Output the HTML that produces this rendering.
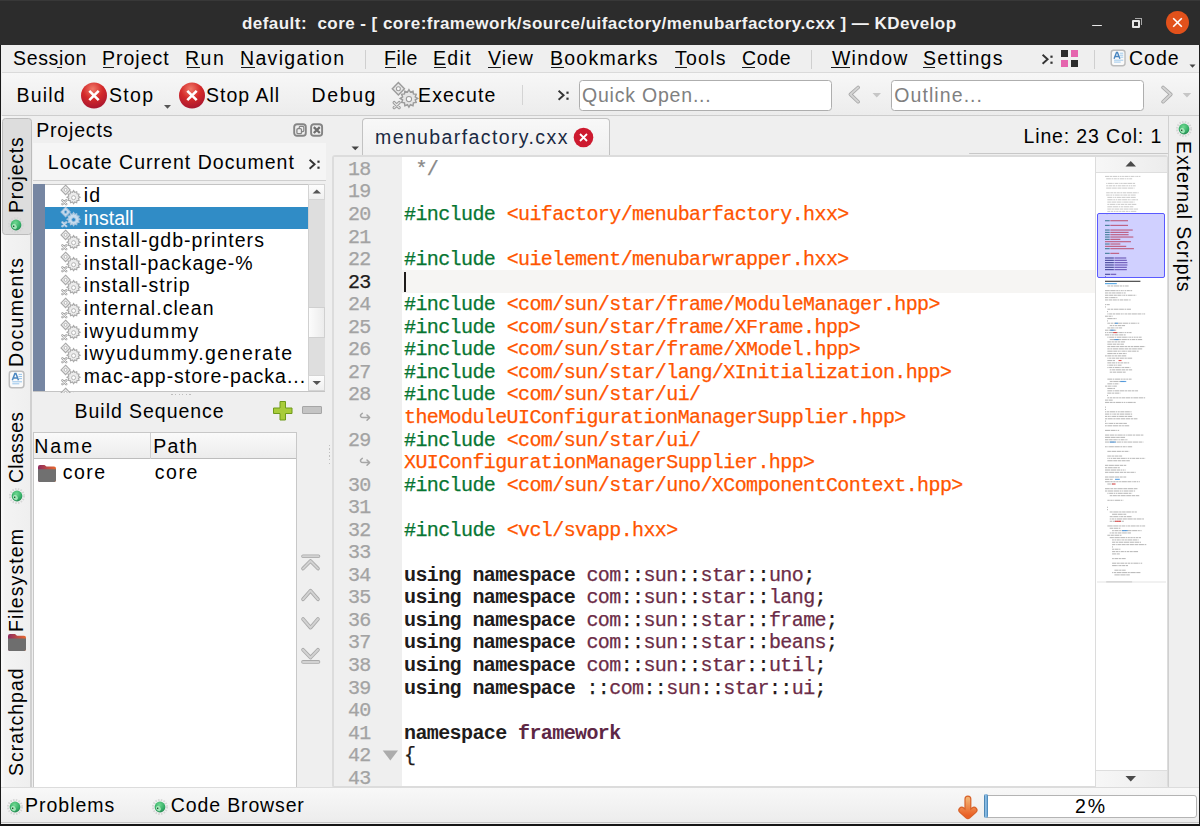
<!DOCTYPE html>
<html><head><meta charset="utf-8"><style>
*{margin:0;padding:0;box-sizing:border-box}
html,body{width:1200px;height:826px;overflow:hidden;background:#efefef;font-family:"Liberation Sans", sans-serif;position:relative}
.t{position:absolute;white-space:pre}
.a{position:absolute}
</style></head><body>
<!-- title bar -->
<div class=a style="left:0;top:0;width:1200px;height:45px;background:#2c2c2c"></div>
<div class=a style="left:0;top:0;width:1200px;height:1px;background:#383838"></div>
<div class=a style="left:1092px;top:24.5px;width:10px;height:1.6px;background:#e8e8e8;border-radius:1px"></div>
<div class=a style="left:1134.6px;top:17.6px;width:7.6px;height:7.6px;border-top:1.3px solid #a8a8a8;border-right:1.3px solid #a8a8a8"></div>
<div class=a style="left:1132px;top:19.8px;width:7.8px;height:7.8px;border:2px solid #e6e6e6;border-radius:1px;background:#2c2c2c"></div>
<div class=a style="left:1166px;top:11px;width:23px;height:23px;border-radius:50%;background:#e2511b"></div>
<svg class=a style="left:1166px;top:11px" width="23" height="23"><path d="M7.2 7.2L15.8 15.8M15.8 7.2L7.2 15.8" stroke="#fff" stroke-width="1.6"/></svg>
<!-- window border -->
<div class=a style="left:0;top:45px;width:1.1px;height:781px;background:#1a1a1a"></div>
<div class=a style="left:1198.8px;top:45px;width:1.5px;height:781px;background:#1e1e1e"></div>
<div class=a style="left:0;top:824.3px;width:1200px;height:2px;background:#161616"></div>
<!-- menubar -->
<div class=a style="left:1.1px;top:45px;width:1197.5px;height:27px;background:#efefef"></div>
<div class=a style="left:1.5px;top:72px;width:1197px;height:1px;background:#dadada"></div>
<!-- menu underlines -->
<div id=ul></div>
<div class=a style="left:365px;top:50px;width:1px;height:19px;background:#cfcfcf"></div>
<div class=a style="left:811px;top:50px;width:1px;height:19px;background:#cfcfcf"></div>
<div class=a style="left:1093.5px;top:50px;width:1px;height:19px;background:#cfcfcf"></div>
<!-- toolbar -->
<div class=a style="left:1.5px;top:73px;width:1197px;height:42px;background:linear-gradient(#f7f7f7,#ececec)"></div>
<div class=a style="left:1.5px;top:114.5px;width:1197px;height:1px;background:#cdcdcd"></div>
<div class=a style="left:522px;top:85px;width:1px;height:20px;background:#d4d4d4"></div>
<!-- menu right icons -->
<svg class=a style="left:1040px;top:52px" width="14" height="14"><path d="M2.6 2.8L7.6 7.3L2.6 11.8" fill="none" stroke="#333" stroke-width="1.9"/><rect x="10.4" y="3.6" width="2.2" height="2.2" fill="#333"/><rect x="10.4" y="9.6" width="2.2" height="2.2" fill="#333"/></svg>
<div class=a style="left:1061px;top:50px;width:7px;height:7px;background:#2b2b2b"></div>
<div class=a style="left:1071px;top:50px;width:7px;height:7px;background:#e565ae"></div>
<div class=a style="left:1061px;top:59.5px;width:7px;height:7px;background:#e565ae"></div>
<div class=a style="left:1071px;top:59.5px;width:7px;height:7px;background:#2b2b2b"></div>
<svg class=a style="left:1109.5px;top:48.8px" width="17" height="19"><use href="#docic" width="17" height="19"/></svg>
<svg class=a style="left:1189px;top:64px" width="8" height="5"><path d="M0.5 0.5L6.5 0.5L3.5 3.8Z" fill="#444"/></svg>
<!-- toolbar icons -->
<svg class=a style="left:80px;top:82px" width="28" height="28"><defs><radialGradient id="rg" cx="0.45" cy="0.25" r="0.85"><stop offset="0" stop-color="#f07a6a"/><stop offset="0.45" stop-color="#d42a2a"/><stop offset="1" stop-color="#9e1030"/></radialGradient></defs><circle cx="14" cy="13.5" r="13" fill="url(#rg)"/><path d="M9.3 8.8L18.7 18.2M18.7 8.8L9.3 18.2" stroke="#fff" stroke-width="2.6"/></svg>
<svg class=a style="left:164px;top:104.5px" width="8" height="5"><path d="M0 0L7 0L3.5 3.7Z" fill="#555"/></svg>
<svg class=a style="left:177.5px;top:82px" width="28" height="28"><circle cx="14" cy="13.5" r="13" fill="url(#rg)"/><path d="M9.3 8.8L18.7 18.2M18.7 8.8L9.3 18.2" stroke="#fff" stroke-width="2.6"/></svg>
<svg class=a style="left:556px;top:88px" width="14" height="14"><path d="M2.6 2.8L7.6 7.3L2.6 11.8" fill="none" stroke="#333" stroke-width="1.9"/><rect x="10.4" y="3.6" width="2.2" height="2.2" fill="#333"/><rect x="10.4" y="9.6" width="2.2" height="2.2" fill="#333"/></svg>
<div class=a style="left:579px;top:79.6px;width:252.8px;height:31.6px;background:#fff;border:1.4px solid #aeaeae;border-radius:3.5px"></div>
<div class=a style="left:891px;top:79.6px;width:252.5px;height:31.6px;background:#fff;border:1.4px solid #aeaeae;border-radius:3.5px"></div>
<svg class=a style="left:840px;top:80px" width="360" height="30"><g fill="none" stroke-linecap="round" stroke-linejoin="round"><path d="M18.1 7.5L10.4 14.4L18.1 21.7M323.1 7.5L330.8 14.4L323.1 21.7" stroke="#a9a9a9" stroke-width="3.6"/><path d="M18.1 7.5L10.4 14.4L18.1 21.7M323.1 7.5L330.8 14.4L323.1 21.7" stroke="#d4d4d4" stroke-width="1.9"/></g><path d="M32.5 13.1H41L36.75 17.5ZM342.7 13.1H351.2L346.95 17.5Z" fill="#c6c6c6"/></svg>
<!-- left tab strip -->
<div class=a style="left:1.1px;top:115.5px;width:29px;height:672px;background:linear-gradient(90deg,#fafafa,#f3f3f3 15%,#efefef)"></div>
<div class=a style="left:29.8px;top:183.5px;width:2.6px;height:604px;background:#d0d0d0"></div>
<div class=a style="left:1.6px;top:118px;width:30.2px;height:117.2px;background:#dddddd;border:1.4px solid #bcbcbc;border-radius:3.5px"></div>
<!-- projects panel -->
<svg class=a style="left:292px;top:122px" width="34" height="17"><g fill="none" stroke="#858585"><rect x="2.2" y="2.2" width="11.6" height="11.6" rx="2.8" stroke-width="1.9"/><rect x="19.1" y="2.2" width="11" height="11.6" rx="2.8" stroke-width="1.9"/><rect x="4.9" y="6.6" width="4.6" height="5" rx="1.2" stroke-width="1.3"/><path d="M7.2 6.3V5.4Q7.2 4.4 8.2 4.4H10.8Q11.8 4.4 11.8 5.4V8.6Q11.8 9.6 10.8 9.6H9.8" stroke-width="1.2"/><path d="M21.8 5.2L27.8 11M27.8 5.2L21.8 11" stroke="#6e6e6e" stroke-width="2.3"/></g></svg>
<div class=a style="left:32.5px;top:142.5px;width:293px;height:38px;background:#f5f5f5"></div>
<div class=a style="left:32.5px;top:180px;width:293px;height:1px;background:#cfcfcf"></div>
<svg class=a style="left:307px;top:157px" width="14" height="14"><path d="M2.6 2.8L7.6 7.3L2.6 11.8" fill="none" stroke="#333" stroke-width="1.9"/><rect x="10.4" y="3.6" width="2.2" height="2.2" fill="#333"/><rect x="10.4" y="9.6" width="2.2" height="2.2" fill="#333"/></svg>
<div class=a style="left:32.5px;top:183.5px;width:292.5px;height:208px;background:#fff;border:1px solid #c4c4c4"></div>
<div class=a style="left:33.2px;top:184.3px;width:11.8px;height:206.5px;background:#7686a2"></div>
<div class=a style="left:45px;top:207px;width:263px;height:22px;background:#308cc6"></div>
<div class=a style="left:308px;top:184px;width:16.6px;height:207px;background:#dedede;border-left:1px solid #d0d0d0"></div>
<div class=a style="left:308px;top:184px;width:16.6px;height:15.5px;background:linear-gradient(#fdfdfd,#efefef);border:1px solid #d4d4d4"></div>
<div class=a style="left:308px;top:374.5px;width:16.6px;height:16.5px;background:linear-gradient(#fdfdfd,#efefef);border:1px solid #d4d4d4"></div>
<div class=a style="left:308px;top:306.5px;width:16.6px;height:31.5px;background:linear-gradient(90deg,#fcfcfc,#ececec);border:1px solid #d0d0d0"></div>
<svg class=a style="left:310.5px;top:187px" width="12" height="10"><path d="M1.5 6.5L10 6.5L5.75 2.5Z" fill="#555"/></svg>
<svg class=a style="left:310.5px;top:378px" width="12" height="10"><path d="M1.5 3L10 3L5.75 7Z" fill="#555"/></svg>
<div class=a style="left:171.3px;top:393.5px;width:1.3px;height:1.5px;background:#bdbdbd"></div><div class=a style="left:174.9px;top:393.5px;width:1.3px;height:1.5px;background:#bdbdbd"></div><div class=a style="left:178.5px;top:393.5px;width:1.3px;height:1.5px;background:#bdbdbd"></div><div class=a style="left:182.1px;top:393.5px;width:1.3px;height:1.5px;background:#bdbdbd"></div><div class=a style="left:185.7px;top:393.5px;width:1.3px;height:1.5px;background:#bdbdbd"></div><div class=a style="left:189.3px;top:393.5px;width:1.3px;height:1.5px;background:#bdbdbd"></div>
<svg class=a style="left:272px;top:400px" width="22" height="22"><path d="M8 1.5h5.5v6.5h6.5v5.5h-6.5v6.5h-5.5v-6.5h-6.5v-5.5h6.5z" fill="#a8cc3a" stroke="#6f9a1a" stroke-width="1"/></svg>
<div class=a style="left:302px;top:406px;width:19.5px;height:7.5px;background:#c4c4c4;border:1px solid #a6a6a6;border-radius:1px"></div>
<div class=a style="left:32.6px;top:431.7px;width:264px;height:356px;background:#fff;border:1px solid #c8c8c8"></div>
<div class=a style="left:33.5px;top:432.5px;width:262.5px;height:26.5px;background:linear-gradient(#fafafa,#ececec);border-bottom:1px solid #bdbdbd"></div>
<div class=a style="left:150.2px;top:433px;width:1px;height:26px;background:#d0d0d0"></div>
<svg class=a style="left:36.5px;top:463.5px" width="22" height="19"><defs><linearGradient id="fg" x1="0" y1="0" x2="1" y2="0"><stop offset="0" stop-color="#8c2a5e"/><stop offset="1" stop-color="#e8682e"/></linearGradient></defs><path d="M1 3Q1 1 3 1H7.5L9.5 2.6H17Q19 2.6 19 4.6V16Q19 18 17 18H3Q1 18 1 16Z" fill="url(#fg)"/><path d="M1 5.2H19V16Q19 18 17 18H3Q1 18 1 16Z" fill="#707070"/></svg>
<!-- splitter grip -->
<div class=a style="left:329px;top:444.6px;width:1.4px;height:1.4px;background:#c0c0c0"></div><div class=a style="left:329px;top:448.2px;width:1.4px;height:1.4px;background:#c0c0c0"></div><div class=a style="left:329px;top:451.8px;width:1.4px;height:1.4px;background:#c0c0c0"></div><div class=a style="left:329px;top:455.4px;width:1.4px;height:1.4px;background:#c0c0c0"></div><div class=a style="left:329px;top:459.0px;width:1.4px;height:1.4px;background:#c0c0c0"></div><div class=a style="left:329px;top:462.6px;width:1.4px;height:1.4px;background:#c0c0c0"></div>
<!-- nav arrows -->
<svg class=a style="left:296px;top:545px" width="30" height="130"><g fill="none" stroke-linecap="round" stroke-linejoin="round"><g id="navp" stroke="#a9a9a9" stroke-width="3.6"><path d="M7 11.3H22.5M7 23.6L14.5 16L22 23.6M7 54.3L14.5 45.7L22 54.3M7 74L14.5 82.7L22 74M7 104.7L14.5 112.6L22 104.7M7 116.9H22.5"/></g><g stroke="#d2d2d2" stroke-width="2"><path d="M7 11.3H22.5M7 23.6L14.5 16L22 23.6M7 54.3L14.5 45.7L22 54.3M7 74L14.5 82.7L22 74M7 104.7L14.5 112.6L22 104.7M7 116.9H22.5"/></g></g></svg>

<style>.cl{position:absolute;white-space:pre;font-family:"Liberation Mono",monospace;font-size:20px;letter-spacing:-0.6px;line-height:22.55px;height:22.55px;-webkit-text-stroke:0.25px currentColor}</style><div class=a style="left:332px;top:155px;width:836px;height:633px;background:#fff;border:2px solid #dcdcdc;border-radius:3px"></div>
<div class=a style="left:334px;top:157px;width:67.9px;height:629px;background:#efefef"></div>
<div class=a style="left:401.9px;top:270.00px;width:694.4px;height:22.55px;background:#f6f5f3"></div>
<div class=a style="left:334px;top:270.00px;width:67.9px;height:22.55px;background:#efefef"></div>
<div class=cl style="top:158.90px;left:347.9px;color:#a3a3a3">18</div>
<div class=cl style="top:158.90px;left:404px"><span style="color:#898887"> */</span></div>
<div class=cl style="top:181.45px;left:347.9px;color:#a3a3a3">19</div>
<div class=cl style="top:204.00px;left:347.9px;color:#a3a3a3">20</div>
<div class=cl style="top:204.00px;left:404px"><span style="color:#077632">#include </span><span style="color:#ff5500">&lt;uifactory/menubarfactory.hxx&gt;</span></div>
<div class=cl style="top:226.55px;left:347.9px;color:#a3a3a3">21</div>
<div class=cl style="top:249.10px;left:347.9px;color:#a3a3a3">22</div>
<div class=cl style="top:249.10px;left:404px"><span style="color:#077632">#include </span><span style="color:#ff5500">&lt;uielement/menubarwrapper.hxx&gt;</span></div>
<div class=cl style="top:271.65px;left:347.9px;color:#1f1c1b">23</div>
<div class=cl style="top:294.20px;left:347.9px;color:#a3a3a3">24</div>
<div class=cl style="top:294.20px;left:404px"><span style="color:#077632">#include </span><span style="color:#ff5500">&lt;com/sun/star/frame/ModuleManager.hpp&gt;</span></div>
<div class=cl style="top:316.75px;left:347.9px;color:#a3a3a3">25</div>
<div class=cl style="top:316.75px;left:404px"><span style="color:#077632">#include </span><span style="color:#ff5500">&lt;com/sun/star/frame/XFrame.hpp&gt;</span></div>
<div class=cl style="top:339.30px;left:347.9px;color:#a3a3a3">26</div>
<div class=cl style="top:339.30px;left:404px"><span style="color:#077632">#include </span><span style="color:#ff5500">&lt;com/sun/star/frame/XModel.hpp&gt;</span></div>
<div class=cl style="top:361.85px;left:347.9px;color:#a3a3a3">27</div>
<div class=cl style="top:361.85px;left:404px"><span style="color:#077632">#include </span><span style="color:#ff5500">&lt;com/sun/star/lang/XInitialization.hpp&gt;</span></div>
<div class=cl style="top:384.40px;left:347.9px;color:#a3a3a3">28</div>
<div class=cl style="top:384.40px;left:404px"><span style="color:#077632">#include </span><span style="color:#ff5500">&lt;com/sun/star/ui/</span></div>
<svg class=a style="left:355px;top:405.30px" width="20" height="22"><path d="M7.3 8.3Q5 9.7 5.6 11.3Q6.3 12.6 8 12.6H14" fill="none" stroke="#a6a6a6" stroke-width="1.5" stroke-linecap="round"/><path d="M12 10L14.6 12.6L12 15.2" fill="none" stroke="#a6a6a6" stroke-width="1.5" stroke-linecap="round" stroke-linejoin="round"/></svg>
<div class=cl style="top:406.95px;left:404px"><span style="color:#ff5500">theModuleUIConfigurationManagerSupplier.hpp&gt;</span></div>
<div class=cl style="top:429.50px;left:347.9px;color:#a3a3a3">29</div>
<div class=cl style="top:429.50px;left:404px"><span style="color:#077632">#include </span><span style="color:#ff5500">&lt;com/sun/star/ui/</span></div>
<svg class=a style="left:355px;top:450.40px" width="20" height="22"><path d="M7.3 8.3Q5 9.7 5.6 11.3Q6.3 12.6 8 12.6H14" fill="none" stroke="#a6a6a6" stroke-width="1.5" stroke-linecap="round"/><path d="M12 10L14.6 12.6L12 15.2" fill="none" stroke="#a6a6a6" stroke-width="1.5" stroke-linecap="round" stroke-linejoin="round"/></svg>
<div class=cl style="top:452.05px;left:404px"><span style="color:#ff5500">XUIConfigurationManagerSupplier.hpp&gt;</span></div>
<div class=cl style="top:474.60px;left:347.9px;color:#a3a3a3">30</div>
<div class=cl style="top:474.60px;left:404px"><span style="color:#077632">#include </span><span style="color:#ff5500">&lt;com/sun/star/uno/XComponentContext.hpp&gt;</span></div>
<div class=cl style="top:497.15px;left:347.9px;color:#a3a3a3">31</div>
<div class=cl style="top:519.70px;left:347.9px;color:#a3a3a3">32</div>
<div class=cl style="top:519.70px;left:404px"><span style="color:#077632">#include </span><span style="color:#ff5500">&lt;vcl/svapp.hxx&gt;</span></div>
<div class=cl style="top:542.25px;left:347.9px;color:#a3a3a3">33</div>
<div class=cl style="top:564.80px;left:347.9px;color:#a3a3a3">34</div>
<div class=cl style="top:564.80px;left:404px"><span style="color:#1f1c1b;font-weight:700;-webkit-text-stroke:0">using namespace </span><span style="color:#6c2c47">com</span><span style="color:#1f1c1b">::</span><span style="color:#6c2c47">sun</span><span style="color:#1f1c1b">::</span><span style="color:#6c2c47">star</span><span style="color:#1f1c1b">::</span><span style="color:#6c2c47">uno</span><span style="color:#1f1c1b">;</span></div>
<div class=cl style="top:587.35px;left:347.9px;color:#a3a3a3">35</div>
<div class=cl style="top:587.35px;left:404px"><span style="color:#1f1c1b;font-weight:700;-webkit-text-stroke:0">using namespace </span><span style="color:#6c2c47">com</span><span style="color:#1f1c1b">::</span><span style="color:#6c2c47">sun</span><span style="color:#1f1c1b">::</span><span style="color:#6c2c47">star</span><span style="color:#1f1c1b">::</span><span style="color:#6c2c47">lang</span><span style="color:#1f1c1b">;</span></div>
<div class=cl style="top:609.90px;left:347.9px;color:#a3a3a3">36</div>
<div class=cl style="top:609.90px;left:404px"><span style="color:#1f1c1b;font-weight:700;-webkit-text-stroke:0">using namespace </span><span style="color:#6c2c47">com</span><span style="color:#1f1c1b">::</span><span style="color:#6c2c47">sun</span><span style="color:#1f1c1b">::</span><span style="color:#6c2c47">star</span><span style="color:#1f1c1b">::</span><span style="color:#6c2c47">frame</span><span style="color:#1f1c1b">;</span></div>
<div class=cl style="top:632.45px;left:347.9px;color:#a3a3a3">37</div>
<div class=cl style="top:632.45px;left:404px"><span style="color:#1f1c1b;font-weight:700;-webkit-text-stroke:0">using namespace </span><span style="color:#6c2c47">com</span><span style="color:#1f1c1b">::</span><span style="color:#6c2c47">sun</span><span style="color:#1f1c1b">::</span><span style="color:#6c2c47">star</span><span style="color:#1f1c1b">::</span><span style="color:#6c2c47">beans</span><span style="color:#1f1c1b">;</span></div>
<div class=cl style="top:655.00px;left:347.9px;color:#a3a3a3">38</div>
<div class=cl style="top:655.00px;left:404px"><span style="color:#1f1c1b;font-weight:700;-webkit-text-stroke:0">using namespace </span><span style="color:#6c2c47">com</span><span style="color:#1f1c1b">::</span><span style="color:#6c2c47">sun</span><span style="color:#1f1c1b">::</span><span style="color:#6c2c47">star</span><span style="color:#1f1c1b">::</span><span style="color:#6c2c47">util</span><span style="color:#1f1c1b">;</span></div>
<div class=cl style="top:677.55px;left:347.9px;color:#a3a3a3">39</div>
<div class=cl style="top:677.55px;left:404px"><span style="color:#1f1c1b;font-weight:700;-webkit-text-stroke:0">using namespace </span><span style="color:#1f1c1b">::</span><span style="color:#6c2c47">com</span><span style="color:#1f1c1b">::</span><span style="color:#6c2c47">sun</span><span style="color:#1f1c1b">::</span><span style="color:#6c2c47">star</span><span style="color:#1f1c1b">::</span><span style="color:#6c2c47">ui</span><span style="color:#1f1c1b">;</span></div>
<div class=cl style="top:700.10px;left:347.9px;color:#a3a3a3">40</div>
<div class=cl style="top:722.65px;left:347.9px;color:#a3a3a3">41</div>
<div class=cl style="top:722.65px;left:404px"><span style="color:#1f1c1b;font-weight:700;-webkit-text-stroke:0">namespace </span><span style="color:#5e2745;font-weight:700;-webkit-text-stroke:0">framework</span></div>
<div class=cl style="top:745.20px;left:347.9px;color:#a3a3a3">42</div>
<div class=cl style="top:745.20px;left:404px"><span style="color:#1f1c1b">{</span></div>
<div class=cl style="top:767.75px;left:347.9px;color:#a3a3a3">43</div>
<div class=a style="left:404px;top:272.00px;width:2px;height:20px;background:#1f1c1b"></div>
<svg class=a style="left:382px;top:748.5px" width="18" height="13"><path d="M0.7 1.5H16L8.35 11.5Z" fill="#acacac"/></svg>
<!-- editor tab -->
<div class=a style="left:361.6px;top:118.4px;width:248.6px;height:37px;background:linear-gradient(#f8f8f8,#f0f0f0);border:1px solid #c2c2c2;border-bottom:none;border-radius:4px 4px 0 0"></div>
<div class=a style="left:969px;top:152.6px;width:199px;height:1.2px;background:#c8c8c8;border-radius:1px"></div>
<svg class=a style="left:351px;top:146px" width="9" height="6"><path d="M0.5 0.5H8L4.25 4.3Z" fill="#444"/></svg>
<svg class=a style="left:573px;top:126.5px" width="21" height="21"><circle cx="10.5" cy="10.5" r="9.8" fill="#cd1a2f"/><path d="M7 7L14 14M14 7L7 14" stroke="#fff" stroke-width="1.8"/></svg>
<!-- minimap scrollbar -->
<div class=a style="left:1095.3px;top:156.6px;width:71.7px;height:630px;background:#fff;border-left:1.6px solid #dcdcdc"></div>
<div class=a style="left:1096px;top:156.6px;width:71px;height:16px;background:linear-gradient(90deg,#f7f7f7,#ececec);border-bottom:1px solid #dedede"></div>
<svg class=a style="left:1125px;top:160px" width="12" height="8"><path d="M0.5 6.5H11L5.75 1Z" fill="#4a4a4a"/></svg>
<div class=a style="left:1096px;top:770.4px;width:71px;height:16.6px;background:linear-gradient(90deg,#f7f7f7,#ececec);border-top:1px solid #dedede"></div>
<svg class=a style="left:1125px;top:775px" width="12" height="8"><path d="M0.5 1H11L5.75 6.5Z" fill="#4a4a4a"/></svg>
<div id=mm><svg class=a style="left:0;top:0" width="1200" height="600"><rect x="1105.00" y="175.90" width="4.13" height="1.1" fill="#8a8a8a" opacity="0.42"/><rect x="1109.72" y="175.90" width="2.36" height="1.1" fill="#8a8a8a" opacity="0.42"/><rect x="1112.67" y="175.90" width="4.72" height="1.1" fill="#8a8a8a" opacity="0.42"/><rect x="1117.98" y="175.90" width="1.18" height="1.1" fill="#8a8a8a" opacity="0.42"/><rect x="1119.75" y="175.90" width="1.77" height="1.1" fill="#8a8a8a" opacity="0.42"/><rect x="1122.11" y="175.90" width="1.77" height="1.1" fill="#8a8a8a" opacity="0.42"/><rect x="1124.47" y="175.90" width="4.13" height="1.1" fill="#8a8a8a" opacity="0.42"/><rect x="1129.19" y="175.90" width="1.18" height="1.1" fill="#8a8a8a" opacity="0.42"/><rect x="1130.96" y="175.90" width="2.95" height="1.1" fill="#8a8a8a" opacity="0.42"/><rect x="1134.50" y="175.90" width="1.18" height="1.1" fill="#8a8a8a" opacity="0.42"/><rect x="1136.27" y="175.90" width="1.77" height="1.1" fill="#8a8a8a" opacity="0.42"/><rect x="1138.63" y="175.90" width="1.77" height="1.1" fill="#8a8a8a" opacity="0.42"/><rect x="1106.18" y="178.23" width="4.72" height="1.1" fill="#8a8a8a" opacity="0.42"/><rect x="1111.49" y="178.23" width="1.77" height="1.1" fill="#8a8a8a" opacity="0.42"/><rect x="1113.85" y="178.23" width="2.95" height="1.1" fill="#8a8a8a" opacity="0.42"/><rect x="1117.39" y="178.23" width="1.77" height="1.1" fill="#8a8a8a" opacity="0.42"/><rect x="1119.75" y="178.23" width="4.72" height="1.1" fill="#8a8a8a" opacity="0.42"/><rect x="1125.06" y="178.23" width="1.18" height="1.1" fill="#8a8a8a" opacity="0.42"/><rect x="1126.83" y="178.23" width="1.77" height="1.1" fill="#8a8a8a" opacity="0.42"/><rect x="1129.19" y="178.23" width="2.95" height="1.1" fill="#8a8a8a" opacity="0.42"/><rect x="1106.18" y="182.89" width="1.18" height="1.1" fill="#8a8a8a" opacity="0.42"/><rect x="1107.95" y="182.89" width="4.72" height="1.1" fill="#8a8a8a" opacity="0.42"/><rect x="1113.26" y="182.89" width="1.18" height="1.1" fill="#8a8a8a" opacity="0.42"/><rect x="1115.03" y="182.89" width="2.95" height="1.1" fill="#8a8a8a" opacity="0.42"/><rect x="1118.57" y="182.89" width="1.18" height="1.1" fill="#8a8a8a" opacity="0.42"/><rect x="1120.34" y="182.89" width="2.36" height="1.1" fill="#8a8a8a" opacity="0.42"/><rect x="1123.29" y="182.89" width="3.54" height="1.1" fill="#8a8a8a" opacity="0.42"/><rect x="1127.42" y="182.89" width="4.72" height="1.1" fill="#8a8a8a" opacity="0.42"/><rect x="1132.73" y="182.89" width="2.36" height="1.1" fill="#8a8a8a" opacity="0.42"/><rect x="1106.18" y="185.22" width="1.77" height="1.1" fill="#8a8a8a" opacity="0.42"/><rect x="1108.54" y="185.22" width="3.54" height="1.1" fill="#8a8a8a" opacity="0.42"/><rect x="1112.67" y="185.22" width="2.36" height="1.1" fill="#8a8a8a" opacity="0.42"/><rect x="1115.62" y="185.22" width="1.77" height="1.1" fill="#8a8a8a" opacity="0.42"/><rect x="1117.98" y="185.22" width="2.95" height="1.1" fill="#8a8a8a" opacity="0.42"/><rect x="1121.52" y="185.22" width="4.13" height="1.1" fill="#8a8a8a" opacity="0.42"/><rect x="1126.24" y="185.22" width="1.77" height="1.1" fill="#8a8a8a" opacity="0.42"/><rect x="1128.60" y="185.22" width="1.77" height="1.1" fill="#8a8a8a" opacity="0.42"/><rect x="1130.96" y="185.22" width="1.18" height="1.1" fill="#8a8a8a" opacity="0.42"/><rect x="1132.73" y="185.22" width="2.95" height="1.1" fill="#8a8a8a" opacity="0.42"/><rect x="1106.18" y="187.55" width="5.31" height="1.1" fill="#8a8a8a" opacity="0.42"/><rect x="1112.08" y="187.55" width="4.72" height="1.1" fill="#8a8a8a" opacity="0.42"/><rect x="1117.39" y="187.55" width="4.13" height="1.1" fill="#8a8a8a" opacity="0.42"/><rect x="1122.11" y="187.55" width="5.31" height="1.1" fill="#8a8a8a" opacity="0.42"/><rect x="1128.01" y="187.55" width="5.31" height="1.1" fill="#8a8a8a" opacity="0.42"/><rect x="1133.91" y="187.55" width="0.59" height="1.1" fill="#8a8a8a" opacity="0.42"/><rect x="1106.18" y="192.21" width="3.54" height="1.1" fill="#8a8a8a" opacity="0.42"/><rect x="1110.31" y="192.21" width="2.95" height="1.1" fill="#8a8a8a" opacity="0.42"/><rect x="1113.85" y="192.21" width="2.36" height="1.1" fill="#8a8a8a" opacity="0.42"/><rect x="1116.80" y="192.21" width="2.95" height="1.1" fill="#8a8a8a" opacity="0.42"/><rect x="1120.34" y="192.21" width="1.77" height="1.1" fill="#8a8a8a" opacity="0.42"/><rect x="1122.70" y="192.21" width="3.54" height="1.1" fill="#8a8a8a" opacity="0.42"/><rect x="1126.83" y="192.21" width="5.31" height="1.1" fill="#8a8a8a" opacity="0.42"/><rect x="1132.73" y="192.21" width="4.13" height="1.1" fill="#8a8a8a" opacity="0.42"/><rect x="1137.45" y="192.21" width="1.18" height="1.1" fill="#8a8a8a" opacity="0.42"/><rect x="1106.18" y="194.54" width="3.54" height="1.1" fill="#8a8a8a" opacity="0.42"/><rect x="1110.31" y="194.54" width="1.77" height="1.1" fill="#8a8a8a" opacity="0.42"/><rect x="1112.67" y="194.54" width="1.77" height="1.1" fill="#8a8a8a" opacity="0.42"/><rect x="1115.03" y="194.54" width="4.72" height="1.1" fill="#8a8a8a" opacity="0.42"/><rect x="1120.34" y="194.54" width="2.36" height="1.1" fill="#8a8a8a" opacity="0.42"/><rect x="1123.29" y="194.54" width="4.13" height="1.1" fill="#8a8a8a" opacity="0.42"/><rect x="1128.01" y="194.54" width="2.36" height="1.1" fill="#8a8a8a" opacity="0.42"/><rect x="1130.96" y="194.54" width="4.72" height="1.1" fill="#8a8a8a" opacity="0.42"/><rect x="1107.36" y="196.87" width="4.72" height="1.1" fill="#8a8a8a" opacity="0.42"/><rect x="1112.67" y="196.87" width="1.18" height="1.1" fill="#8a8a8a" opacity="0.42"/><rect x="1114.44" y="196.87" width="1.77" height="1.1" fill="#8a8a8a" opacity="0.42"/><rect x="1116.80" y="196.87" width="4.13" height="1.1" fill="#8a8a8a" opacity="0.42"/><rect x="1121.52" y="196.87" width="4.13" height="1.1" fill="#8a8a8a" opacity="0.42"/><rect x="1126.24" y="196.87" width="4.13" height="1.1" fill="#8a8a8a" opacity="0.42"/><rect x="1130.96" y="196.87" width="4.72" height="1.1" fill="#8a8a8a" opacity="0.42"/><rect x="1107.36" y="199.20" width="5.31" height="1.1" fill="#8a8a8a" opacity="0.42"/><rect x="1113.26" y="199.20" width="1.77" height="1.1" fill="#8a8a8a" opacity="0.42"/><rect x="1115.62" y="199.20" width="1.77" height="1.1" fill="#8a8a8a" opacity="0.42"/><rect x="1117.98" y="199.20" width="3.54" height="1.1" fill="#8a8a8a" opacity="0.42"/><rect x="1122.11" y="199.20" width="5.31" height="1.1" fill="#8a8a8a" opacity="0.42"/><rect x="1128.01" y="199.20" width="1.77" height="1.1" fill="#8a8a8a" opacity="0.42"/><rect x="1130.37" y="199.20" width="1.18" height="1.1" fill="#8a8a8a" opacity="0.42"/><rect x="1132.14" y="199.20" width="3.54" height="1.1" fill="#8a8a8a" opacity="0.42"/><rect x="1136.27" y="199.20" width="1.77" height="1.1" fill="#8a8a8a" opacity="0.42"/><rect x="1107.36" y="201.53" width="3.54" height="1.1" fill="#8a8a8a" opacity="0.42"/><rect x="1111.49" y="201.53" width="4.72" height="1.1" fill="#8a8a8a" opacity="0.42"/><rect x="1116.80" y="201.53" width="4.13" height="1.1" fill="#8a8a8a" opacity="0.42"/><rect x="1121.52" y="201.53" width="1.18" height="1.1" fill="#8a8a8a" opacity="0.42"/><rect x="1123.29" y="201.53" width="5.31" height="1.1" fill="#8a8a8a" opacity="0.42"/><rect x="1129.19" y="201.53" width="4.13" height="1.1" fill="#8a8a8a" opacity="0.42"/><rect x="1133.91" y="201.53" width="0.59" height="1.1" fill="#8a8a8a" opacity="0.42"/><rect x="1107.36" y="203.86" width="1.77" height="1.1" fill="#8a8a8a" opacity="0.42"/><rect x="1109.72" y="203.86" width="5.31" height="1.1" fill="#8a8a8a" opacity="0.42"/><rect x="1115.62" y="203.86" width="1.18" height="1.1" fill="#8a8a8a" opacity="0.42"/><rect x="1117.39" y="203.86" width="2.95" height="1.1" fill="#8a8a8a" opacity="0.42"/><rect x="1120.93" y="203.86" width="3.54" height="1.1" fill="#8a8a8a" opacity="0.42"/><rect x="1125.06" y="203.86" width="2.36" height="1.1" fill="#8a8a8a" opacity="0.42"/><rect x="1128.01" y="203.86" width="2.95" height="1.1" fill="#8a8a8a" opacity="0.42"/><rect x="1131.55" y="203.86" width="4.72" height="1.1" fill="#8a8a8a" opacity="0.42"/><rect x="1107.36" y="206.19" width="4.72" height="1.1" fill="#8a8a8a" opacity="0.42"/><rect x="1112.67" y="206.19" width="5.31" height="1.1" fill="#8a8a8a" opacity="0.42"/><rect x="1118.57" y="206.19" width="1.77" height="1.1" fill="#8a8a8a" opacity="0.42"/><rect x="1120.93" y="206.19" width="2.36" height="1.1" fill="#8a8a8a" opacity="0.42"/><rect x="1123.88" y="206.19" width="5.31" height="1.1" fill="#8a8a8a" opacity="0.42"/><rect x="1129.78" y="206.19" width="3.54" height="1.1" fill="#8a8a8a" opacity="0.42"/><rect x="1107.36" y="208.52" width="3.54" height="1.1" fill="#8a8a8a" opacity="0.42"/><rect x="1111.49" y="208.52" width="2.36" height="1.1" fill="#8a8a8a" opacity="0.42"/><rect x="1114.44" y="208.52" width="4.72" height="1.1" fill="#8a8a8a" opacity="0.42"/><rect x="1119.75" y="208.52" width="3.54" height="1.1" fill="#8a8a8a" opacity="0.42"/><rect x="1123.88" y="208.52" width="4.72" height="1.1" fill="#8a8a8a" opacity="0.42"/><rect x="1129.19" y="208.52" width="4.13" height="1.1" fill="#8a8a8a" opacity="0.42"/><rect x="1133.91" y="208.52" width="4.13" height="1.1" fill="#8a8a8a" opacity="0.42"/><rect x="1107.36" y="210.85" width="2.95" height="1.1" fill="#8a8a8a" opacity="0.42"/><rect x="1110.90" y="210.85" width="2.36" height="1.1" fill="#8a8a8a" opacity="0.42"/><rect x="1113.85" y="210.85" width="1.77" height="1.1" fill="#8a8a8a" opacity="0.42"/><rect x="1116.21" y="210.85" width="2.36" height="1.1" fill="#8a8a8a" opacity="0.42"/><rect x="1119.16" y="210.85" width="2.36" height="1.1" fill="#8a8a8a" opacity="0.42"/><rect x="1122.11" y="210.85" width="2.95" height="1.1" fill="#8a8a8a" opacity="0.42"/><rect x="1125.65" y="210.85" width="2.95" height="1.1" fill="#8a8a8a" opacity="0.42"/><rect x="1129.19" y="210.85" width="1.18" height="1.1" fill="#8a8a8a" opacity="0.42"/><rect x="1130.96" y="210.85" width="5.31" height="1.1" fill="#8a8a8a" opacity="0.42"/><rect x="1106.18" y="213.18" width="1.77" height="1.1" fill="#8a8a8a" opacity="0.42"/><rect x="1105.00" y="220.17" width="4.72" height="1.1" fill="#1f7a5a" opacity="0.95"/><rect x="1110.31" y="220.17" width="17.70" height="1.1" fill="#e0402a" opacity="0.95"/><rect x="1105.00" y="224.83" width="4.72" height="1.1" fill="#1f7a5a" opacity="0.95"/><rect x="1110.31" y="224.83" width="17.70" height="1.1" fill="#e0402a" opacity="0.95"/><rect x="1105.00" y="229.49" width="4.72" height="1.1" fill="#1f7a5a" opacity="0.95"/><rect x="1110.31" y="229.49" width="22.42" height="1.1" fill="#e0402a" opacity="0.95"/><rect x="1105.00" y="231.82" width="4.72" height="1.1" fill="#1f7a5a" opacity="0.95"/><rect x="1110.31" y="231.82" width="18.29" height="1.1" fill="#e0402a" opacity="0.95"/><rect x="1105.00" y="234.15" width="4.72" height="1.1" fill="#1f7a5a" opacity="0.95"/><rect x="1110.31" y="234.15" width="18.29" height="1.1" fill="#e0402a" opacity="0.95"/><rect x="1105.00" y="236.48" width="4.72" height="1.1" fill="#1f7a5a" opacity="0.95"/><rect x="1110.31" y="236.48" width="23.01" height="1.1" fill="#e0402a" opacity="0.95"/><rect x="1105.00" y="238.81" width="4.72" height="1.1" fill="#1f7a5a" opacity="0.95"/><rect x="1110.31" y="238.81" width="10.03" height="1.1" fill="#e0402a" opacity="0.95"/><rect x="1105.00" y="241.14" width="25.96" height="1.1" fill="#e0402a" opacity="0.95"/><rect x="1105.00" y="243.47" width="4.72" height="1.1" fill="#1f7a5a" opacity="0.95"/><rect x="1110.31" y="243.47" width="10.03" height="1.1" fill="#e0402a" opacity="0.95"/><rect x="1105.00" y="245.80" width="21.24" height="1.1" fill="#e0402a" opacity="0.95"/><rect x="1105.00" y="248.13" width="4.72" height="1.1" fill="#1f7a5a" opacity="0.95"/><rect x="1110.31" y="248.13" width="23.60" height="1.1" fill="#e0402a" opacity="0.95"/><rect x="1105.00" y="252.79" width="4.72" height="1.1" fill="#1f7a5a" opacity="0.95"/><rect x="1110.31" y="252.79" width="8.85" height="1.1" fill="#e0402a" opacity="0.95"/><rect x="1105.00" y="257.45" width="8.85" height="1.1" fill="#20205a" opacity="0.95"/><rect x="1114.44" y="257.45" width="11.80" height="1.1" fill="#5a3a8a" opacity="0.95"/><rect x="1105.00" y="259.78" width="8.85" height="1.1" fill="#20205a" opacity="0.95"/><rect x="1114.44" y="259.78" width="12.39" height="1.1" fill="#5a3a8a" opacity="0.95"/><rect x="1105.00" y="262.11" width="8.85" height="1.1" fill="#20205a" opacity="0.95"/><rect x="1114.44" y="262.11" width="12.98" height="1.1" fill="#5a3a8a" opacity="0.95"/><rect x="1105.00" y="264.44" width="8.85" height="1.1" fill="#20205a" opacity="0.95"/><rect x="1114.44" y="264.44" width="12.98" height="1.1" fill="#5a3a8a" opacity="0.95"/><rect x="1105.00" y="266.77" width="8.85" height="1.1" fill="#20205a" opacity="0.95"/><rect x="1114.44" y="266.77" width="12.39" height="1.1" fill="#5a3a8a" opacity="0.95"/><rect x="1105.00" y="269.10" width="8.85" height="1.1" fill="#20205a" opacity="0.95"/><rect x="1114.44" y="269.10" width="12.39" height="1.1" fill="#5a3a8a" opacity="0.95"/><rect x="1105.00" y="273.76" width="5.31" height="1.1" fill="#20205a" opacity="0.95"/><rect x="1110.90" y="273.76" width="5.31" height="1.1" fill="#5a3a8a" opacity="0.95"/><rect x="1105.00" y="276.09" width="0.59" height="1.1" fill="#20205a" opacity="0.95"/><rect x="1105.00" y="280.75" width="35.40" height="1.1" fill="#303030" opacity="0.95"/><rect x="1105.00" y="283.08" width="11.80" height="1.1" fill="#4aa0e0" opacity="0.95"/><rect x="1107.36" y="285.41" width="2.95" height="1.1" fill="#606060" opacity="0.42"/><rect x="1110.90" y="285.41" width="2.36" height="1.1" fill="#606060" opacity="0.42"/><rect x="1113.85" y="285.41" width="5.31" height="1.1" fill="#606060" opacity="0.42"/><rect x="1119.75" y="285.41" width="2.36" height="1.1" fill="#606060" opacity="0.42"/><rect x="1122.70" y="285.41" width="1.77" height="1.1" fill="#606060" opacity="0.42"/><rect x="1125.06" y="285.41" width="3.54" height="1.1" fill="#606060" opacity="0.42"/><rect x="1105.00" y="290.07" width="4.72" height="1.1" fill="#606060" opacity="0.42"/><rect x="1110.31" y="290.07" width="5.31" height="1.1" fill="#606060" opacity="0.42"/><rect x="1116.21" y="290.07" width="2.36" height="1.1" fill="#606060" opacity="0.42"/><rect x="1119.16" y="290.07" width="1.18" height="1.1" fill="#606060" opacity="0.42"/><rect x="1120.93" y="290.07" width="1.77" height="1.1" fill="#606060" opacity="0.42"/><rect x="1123.29" y="290.07" width="1.18" height="1.1" fill="#606060" opacity="0.42"/><rect x="1125.06" y="290.07" width="1.18" height="1.1" fill="#606060" opacity="0.42"/><rect x="1126.83" y="290.07" width="2.95" height="1.1" fill="#606060" opacity="0.42"/><rect x="1130.37" y="290.07" width="1.77" height="1.1" fill="#606060" opacity="0.42"/><rect x="1105.00" y="292.40" width="2.95" height="1.1" fill="#606060" opacity="0.42"/><rect x="1108.54" y="292.40" width="2.95" height="1.1" fill="#606060" opacity="0.42"/><rect x="1112.08" y="292.40" width="3.54" height="1.1" fill="#606060" opacity="0.42"/><rect x="1116.21" y="292.40" width="5.31" height="1.1" fill="#606060" opacity="0.42"/><rect x="1122.11" y="292.40" width="1.18" height="1.1" fill="#606060" opacity="0.42"/><rect x="1123.88" y="292.40" width="1.77" height="1.1" fill="#606060" opacity="0.42"/><rect x="1105.00" y="294.73" width="3.54" height="1.1" fill="#606060" opacity="0.42"/><rect x="1109.13" y="294.73" width="4.13" height="1.1" fill="#606060" opacity="0.42"/><rect x="1113.85" y="294.73" width="2.95" height="1.1" fill="#606060" opacity="0.42"/><rect x="1117.39" y="294.73" width="3.54" height="1.1" fill="#606060" opacity="0.42"/><rect x="1121.52" y="294.73" width="1.18" height="1.1" fill="#606060" opacity="0.42"/><rect x="1123.29" y="294.73" width="1.77" height="1.1" fill="#606060" opacity="0.42"/><rect x="1125.65" y="294.73" width="1.77" height="1.1" fill="#606060" opacity="0.42"/><rect x="1128.01" y="294.73" width="4.72" height="1.1" fill="#606060" opacity="0.42"/><rect x="1133.32" y="294.73" width="1.77" height="1.1" fill="#606060" opacity="0.42"/><rect x="1135.68" y="294.73" width="0.59" height="1.1" fill="#606060" opacity="0.42"/><rect x="1105.00" y="297.06" width="2.95" height="1.1" fill="#606060" opacity="0.42"/><rect x="1108.54" y="297.06" width="1.18" height="1.1" fill="#606060" opacity="0.42"/><rect x="1110.31" y="297.06" width="5.31" height="1.1" fill="#606060" opacity="0.42"/><rect x="1116.21" y="297.06" width="1.18" height="1.1" fill="#606060" opacity="0.42"/><rect x="1105.00" y="299.39" width="2.95" height="1.1" fill="#606060" opacity="0.42"/><rect x="1108.54" y="299.39" width="3.54" height="1.1" fill="#606060" opacity="0.42"/><rect x="1112.67" y="299.39" width="4.13" height="1.1" fill="#606060" opacity="0.42"/><rect x="1117.39" y="299.39" width="1.77" height="1.1" fill="#606060" opacity="0.42"/><rect x="1119.75" y="299.39" width="3.54" height="1.1" fill="#606060" opacity="0.42"/><rect x="1123.88" y="299.39" width="4.13" height="1.1" fill="#606060" opacity="0.42"/><rect x="1128.60" y="299.39" width="1.18" height="1.1" fill="#606060" opacity="0.42"/><rect x="1130.37" y="299.39" width="0.59" height="1.1" fill="#606060" opacity="0.42"/><rect x="1105.00" y="304.05" width="1.18" height="1.1" fill="#606060" opacity="0.42"/><rect x="1106.77" y="304.05" width="2.95" height="1.1" fill="#606060" opacity="0.42"/><rect x="1105.00" y="306.38" width="0.59" height="1.1" fill="#555" opacity="0.7"/><rect x="1107.36" y="308.71" width="2.95" height="1.1" fill="#606060" opacity="0.42"/><rect x="1110.90" y="308.71" width="2.36" height="1.1" fill="#606060" opacity="0.42"/><rect x="1113.85" y="308.71" width="4.72" height="1.1" fill="#606060" opacity="0.42"/><rect x="1119.16" y="308.71" width="4.72" height="1.1" fill="#606060" opacity="0.42"/><rect x="1124.47" y="308.71" width="1.77" height="1.1" fill="#606060" opacity="0.42"/><rect x="1126.83" y="308.71" width="4.13" height="1.1" fill="#606060" opacity="0.42"/><rect x="1107.36" y="311.04" width="0.59" height="1.1" fill="#555" opacity="0.7"/><rect x="1107.36" y="313.37" width="1.18" height="1.1" fill="#606060" opacity="0.42"/><rect x="1109.13" y="313.37" width="2.95" height="1.1" fill="#606060" opacity="0.42"/><rect x="1112.67" y="313.37" width="2.36" height="1.1" fill="#606060" opacity="0.42"/><rect x="1115.62" y="313.37" width="4.72" height="1.1" fill="#606060" opacity="0.42"/><rect x="1120.93" y="313.37" width="1.77" height="1.1" fill="#606060" opacity="0.42"/><rect x="1123.29" y="313.37" width="1.18" height="1.1" fill="#606060" opacity="0.42"/><rect x="1125.06" y="313.37" width="2.36" height="1.1" fill="#606060" opacity="0.42"/><rect x="1128.01" y="313.37" width="2.95" height="1.1" fill="#606060" opacity="0.42"/><rect x="1131.55" y="313.37" width="5.31" height="1.1" fill="#606060" opacity="0.42"/><rect x="1137.45" y="313.37" width="3.54" height="1.1" fill="#606060" opacity="0.42"/><rect x="1141.58" y="313.37" width="1.18" height="1.1" fill="#606060" opacity="0.42"/><rect x="1143.35" y="313.37" width="1.77" height="1.1" fill="#606060" opacity="0.42"/><rect x="1105.00" y="315.70" width="2.95" height="1.1" fill="#606060" opacity="0.42"/><rect x="1108.54" y="315.70" width="2.95" height="1.1" fill="#606060" opacity="0.42"/><rect x="1112.08" y="315.70" width="0.59" height="1.1" fill="#606060" opacity="0.42"/><rect x="1107.36" y="318.03" width="5.31" height="1.1" fill="#606060" opacity="0.42"/><rect x="1113.26" y="318.03" width="2.36" height="1.1" fill="#606060" opacity="0.42"/><rect x="1116.21" y="318.03" width="0.59" height="1.1" fill="#606060" opacity="0.42"/><rect x="1107.36" y="320.36" width="0.59" height="1.1" fill="#555" opacity="0.7"/><rect x="1107.36" y="322.69" width="2.95" height="1.1" fill="#606060" opacity="0.42"/><rect x="1110.90" y="322.69" width="2.36" height="1.1" fill="#606060" opacity="0.42"/><rect x="1113.85" y="322.69" width="2.95" height="1.1" fill="#606060" opacity="0.42"/><rect x="1117.39" y="322.69" width="4.72" height="1.1" fill="#606060" opacity="0.42"/><rect x="1122.70" y="322.69" width="5.31" height="1.1" fill="#606060" opacity="0.42"/><rect x="1128.60" y="322.69" width="1.77" height="1.1" fill="#606060" opacity="0.42"/><rect x="1130.96" y="322.69" width="4.72" height="1.1" fill="#606060" opacity="0.42"/><rect x="1136.27" y="322.69" width="1.18" height="1.1" fill="#606060" opacity="0.42"/><rect x="1138.04" y="322.69" width="1.18" height="1.1" fill="#606060" opacity="0.42"/><rect x="1115.03" y="322.69" width="2.95" height="1.1" fill="#3a90e0" opacity="0.8"/><rect x="1109.72" y="325.02" width="2.36" height="1.1" fill="#606060" opacity="0.42"/><rect x="1112.67" y="325.02" width="1.77" height="1.1" fill="#606060" opacity="0.42"/><rect x="1115.03" y="325.02" width="2.36" height="1.1" fill="#606060" opacity="0.42"/><rect x="1117.98" y="325.02" width="2.95" height="1.1" fill="#606060" opacity="0.42"/><rect x="1121.52" y="325.02" width="3.54" height="1.1" fill="#606060" opacity="0.42"/><rect x="1107.36" y="327.35" width="2.95" height="1.1" fill="#606060" opacity="0.42"/><rect x="1110.90" y="327.35" width="2.95" height="1.1" fill="#606060" opacity="0.42"/><rect x="1114.44" y="327.35" width="1.18" height="1.1" fill="#606060" opacity="0.42"/><rect x="1116.21" y="327.35" width="1.77" height="1.1" fill="#606060" opacity="0.42"/><rect x="1118.57" y="327.35" width="3.54" height="1.1" fill="#606060" opacity="0.42"/><rect x="1105.00" y="329.68" width="3.54" height="1.1" fill="#606060" opacity="0.42"/><rect x="1109.13" y="329.68" width="4.13" height="1.1" fill="#606060" opacity="0.42"/><rect x="1113.85" y="329.68" width="2.36" height="1.1" fill="#606060" opacity="0.42"/><rect x="1110.31" y="329.68" width="4.13" height="1.1" fill="#3a90e0" opacity="0.8"/><rect x="1105.00" y="332.01" width="1.18" height="1.1" fill="#606060" opacity="0.42"/><rect x="1106.77" y="332.01" width="1.18" height="1.1" fill="#606060" opacity="0.42"/><rect x="1108.54" y="332.01" width="5.31" height="1.1" fill="#606060" opacity="0.42"/><rect x="1114.44" y="332.01" width="4.13" height="1.1" fill="#606060" opacity="0.42"/><rect x="1119.16" y="332.01" width="3.54" height="1.1" fill="#606060" opacity="0.42"/><rect x="1123.29" y="332.01" width="1.18" height="1.1" fill="#606060" opacity="0.42"/><rect x="1125.06" y="332.01" width="1.18" height="1.1" fill="#606060" opacity="0.42"/><rect x="1126.83" y="332.01" width="1.77" height="1.1" fill="#606060" opacity="0.42"/><rect x="1129.19" y="332.01" width="2.36" height="1.1" fill="#606060" opacity="0.42"/><rect x="1113.26" y="332.01" width="3.54" height="1.1" fill="#e03030" opacity="0.8"/><rect x="1105.00" y="334.34" width="4.13" height="1.1" fill="#606060" opacity="0.42"/><rect x="1109.72" y="334.34" width="1.18" height="1.1" fill="#606060" opacity="0.42"/><rect x="1111.49" y="334.34" width="2.36" height="1.1" fill="#606060" opacity="0.42"/><rect x="1114.44" y="334.34" width="4.13" height="1.1" fill="#606060" opacity="0.42"/><rect x="1119.16" y="334.34" width="4.13" height="1.1" fill="#606060" opacity="0.42"/><rect x="1123.88" y="334.34" width="1.77" height="1.1" fill="#606060" opacity="0.42"/><rect x="1107.36" y="336.67" width="1.18" height="1.1" fill="#606060" opacity="0.42"/><rect x="1109.13" y="336.67" width="5.31" height="1.1" fill="#606060" opacity="0.42"/><rect x="1115.03" y="336.67" width="1.18" height="1.1" fill="#606060" opacity="0.42"/><rect x="1116.80" y="336.67" width="4.72" height="1.1" fill="#606060" opacity="0.42"/><rect x="1122.11" y="336.67" width="4.72" height="1.1" fill="#606060" opacity="0.42"/><rect x="1127.42" y="336.67" width="1.18" height="1.1" fill="#606060" opacity="0.42"/><rect x="1129.19" y="336.67" width="1.77" height="1.1" fill="#606060" opacity="0.42"/><rect x="1131.55" y="336.67" width="1.77" height="1.1" fill="#606060" opacity="0.42"/><rect x="1133.91" y="336.67" width="1.77" height="1.1" fill="#606060" opacity="0.42"/><rect x="1136.27" y="336.67" width="1.77" height="1.1" fill="#606060" opacity="0.42"/><rect x="1138.63" y="336.67" width="2.95" height="1.1" fill="#606060" opacity="0.42"/><rect x="1109.72" y="339.00" width="5.31" height="1.1" fill="#606060" opacity="0.42"/><rect x="1115.62" y="339.00" width="5.31" height="1.1" fill="#606060" opacity="0.42"/><rect x="1121.52" y="339.00" width="5.31" height="1.1" fill="#606060" opacity="0.42"/><rect x="1127.42" y="339.00" width="1.77" height="1.1" fill="#606060" opacity="0.42"/><rect x="1129.78" y="339.00" width="1.18" height="1.1" fill="#606060" opacity="0.42"/><rect x="1131.55" y="339.00" width="3.54" height="1.1" fill="#606060" opacity="0.42"/><rect x="1135.68" y="339.00" width="1.77" height="1.1" fill="#606060" opacity="0.42"/><rect x="1138.04" y="339.00" width="4.13" height="1.1" fill="#606060" opacity="0.42"/><rect x="1114.44" y="339.00" width="4.13" height="1.1" fill="#3a90e0" opacity="0.8"/><rect x="1107.36" y="341.33" width="3.54" height="1.1" fill="#606060" opacity="0.42"/><rect x="1111.49" y="341.33" width="2.36" height="1.1" fill="#606060" opacity="0.42"/><rect x="1114.44" y="341.33" width="2.95" height="1.1" fill="#606060" opacity="0.42"/><rect x="1117.98" y="341.33" width="2.36" height="1.1" fill="#606060" opacity="0.42"/><rect x="1120.93" y="341.33" width="4.13" height="1.1" fill="#606060" opacity="0.42"/><rect x="1107.36" y="343.66" width="4.72" height="1.1" fill="#606060" opacity="0.42"/><rect x="1112.67" y="343.66" width="3.54" height="1.1" fill="#606060" opacity="0.42"/><rect x="1116.80" y="343.66" width="2.95" height="1.1" fill="#606060" opacity="0.42"/><rect x="1120.34" y="343.66" width="3.54" height="1.1" fill="#606060" opacity="0.42"/><rect x="1107.36" y="345.99" width="2.95" height="1.1" fill="#606060" opacity="0.42"/><rect x="1110.90" y="345.99" width="4.72" height="1.1" fill="#606060" opacity="0.42"/><rect x="1116.21" y="345.99" width="2.95" height="1.1" fill="#606060" opacity="0.42"/><rect x="1119.75" y="345.99" width="4.13" height="1.1" fill="#606060" opacity="0.42"/><rect x="1124.47" y="345.99" width="2.95" height="1.1" fill="#606060" opacity="0.42"/><rect x="1128.01" y="345.99" width="2.36" height="1.1" fill="#606060" opacity="0.42"/><rect x="1130.96" y="345.99" width="2.36" height="1.1" fill="#606060" opacity="0.42"/><rect x="1133.91" y="345.99" width="5.31" height="1.1" fill="#606060" opacity="0.42"/><rect x="1139.81" y="345.99" width="4.13" height="1.1" fill="#606060" opacity="0.42"/><rect x="1144.53" y="345.99" width="0.59" height="1.1" fill="#606060" opacity="0.42"/><rect x="1107.36" y="348.32" width="2.36" height="1.1" fill="#606060" opacity="0.42"/><rect x="1110.31" y="348.32" width="1.77" height="1.1" fill="#606060" opacity="0.42"/><rect x="1112.67" y="348.32" width="5.31" height="1.1" fill="#606060" opacity="0.42"/><rect x="1118.57" y="348.32" width="5.31" height="1.1" fill="#606060" opacity="0.42"/><rect x="1124.47" y="348.32" width="3.54" height="1.1" fill="#606060" opacity="0.42"/><rect x="1128.60" y="348.32" width="2.95" height="1.1" fill="#606060" opacity="0.42"/><rect x="1132.14" y="348.32" width="4.72" height="1.1" fill="#606060" opacity="0.42"/><rect x="1137.45" y="348.32" width="4.72" height="1.1" fill="#606060" opacity="0.42"/><rect x="1107.36" y="350.65" width="5.31" height="1.1" fill="#606060" opacity="0.42"/><rect x="1113.26" y="350.65" width="4.13" height="1.1" fill="#606060" opacity="0.42"/><rect x="1117.98" y="350.65" width="1.77" height="1.1" fill="#606060" opacity="0.42"/><rect x="1120.34" y="350.65" width="1.18" height="1.1" fill="#606060" opacity="0.42"/><rect x="1122.11" y="350.65" width="3.54" height="1.1" fill="#606060" opacity="0.42"/><rect x="1126.24" y="350.65" width="1.18" height="1.1" fill="#606060" opacity="0.42"/><rect x="1128.01" y="350.65" width="3.54" height="1.1" fill="#606060" opacity="0.42"/><rect x="1132.14" y="350.65" width="4.13" height="1.1" fill="#606060" opacity="0.42"/><rect x="1136.86" y="350.65" width="1.77" height="1.1" fill="#606060" opacity="0.42"/><rect x="1107.36" y="352.98" width="5.31" height="1.1" fill="#606060" opacity="0.42"/><rect x="1113.26" y="352.98" width="2.95" height="1.1" fill="#606060" opacity="0.42"/><rect x="1116.80" y="352.98" width="1.18" height="1.1" fill="#606060" opacity="0.42"/><rect x="1118.57" y="352.98" width="3.54" height="1.1" fill="#606060" opacity="0.42"/><rect x="1122.70" y="352.98" width="2.95" height="1.1" fill="#606060" opacity="0.42"/><rect x="1126.24" y="352.98" width="0.59" height="1.1" fill="#606060" opacity="0.42"/><rect x="1105.00" y="355.31" width="1.77" height="1.1" fill="#606060" opacity="0.42"/><rect x="1107.36" y="355.31" width="4.13" height="1.1" fill="#606060" opacity="0.42"/><rect x="1112.08" y="355.31" width="1.77" height="1.1" fill="#606060" opacity="0.42"/><rect x="1114.44" y="355.31" width="2.95" height="1.1" fill="#606060" opacity="0.42"/><rect x="1117.98" y="355.31" width="2.95" height="1.1" fill="#606060" opacity="0.42"/><rect x="1121.52" y="355.31" width="4.72" height="1.1" fill="#606060" opacity="0.42"/><rect x="1107.36" y="357.64" width="1.18" height="1.1" fill="#606060" opacity="0.42"/><rect x="1109.13" y="357.64" width="2.36" height="1.1" fill="#606060" opacity="0.42"/><rect x="1112.08" y="357.64" width="2.95" height="1.1" fill="#606060" opacity="0.42"/><rect x="1115.62" y="357.64" width="3.54" height="1.1" fill="#606060" opacity="0.42"/><rect x="1119.75" y="357.64" width="4.13" height="1.1" fill="#606060" opacity="0.42"/><rect x="1124.47" y="357.64" width="2.36" height="1.1" fill="#606060" opacity="0.42"/><rect x="1127.42" y="357.64" width="4.72" height="1.1" fill="#606060" opacity="0.42"/><rect x="1107.36" y="359.97" width="4.72" height="1.1" fill="#606060" opacity="0.42"/><rect x="1112.67" y="359.97" width="2.36" height="1.1" fill="#606060" opacity="0.42"/><rect x="1118.57" y="359.97" width="2.95" height="1.1" fill="#e03030" opacity="0.8"/><rect x="1107.36" y="362.30" width="4.13" height="1.1" fill="#606060" opacity="0.42"/><rect x="1112.08" y="362.30" width="2.95" height="1.1" fill="#606060" opacity="0.42"/><rect x="1115.62" y="362.30" width="1.77" height="1.1" fill="#606060" opacity="0.42"/><rect x="1117.98" y="362.30" width="1.77" height="1.1" fill="#606060" opacity="0.42"/><rect x="1120.34" y="362.30" width="2.95" height="1.1" fill="#606060" opacity="0.42"/><rect x="1123.88" y="362.30" width="2.95" height="1.1" fill="#606060" opacity="0.42"/><rect x="1127.42" y="362.30" width="1.77" height="1.1" fill="#606060" opacity="0.42"/><rect x="1107.36" y="364.63" width="1.18" height="1.1" fill="#606060" opacity="0.42"/><rect x="1109.13" y="364.63" width="4.13" height="1.1" fill="#606060" opacity="0.42"/><rect x="1113.85" y="364.63" width="1.77" height="1.1" fill="#606060" opacity="0.42"/><rect x="1116.21" y="364.63" width="1.18" height="1.1" fill="#606060" opacity="0.42"/><rect x="1117.98" y="364.63" width="3.54" height="1.1" fill="#606060" opacity="0.42"/><rect x="1107.36" y="366.96" width="1.18" height="1.1" fill="#606060" opacity="0.42"/><rect x="1109.13" y="366.96" width="2.95" height="1.1" fill="#606060" opacity="0.42"/><rect x="1112.67" y="366.96" width="1.77" height="1.1" fill="#606060" opacity="0.42"/><rect x="1115.03" y="366.96" width="4.72" height="1.1" fill="#606060" opacity="0.42"/><rect x="1120.34" y="366.96" width="1.18" height="1.1" fill="#606060" opacity="0.42"/><rect x="1122.11" y="366.96" width="2.36" height="1.1" fill="#606060" opacity="0.42"/><rect x="1125.06" y="366.96" width="4.13" height="1.1" fill="#606060" opacity="0.42"/><rect x="1129.78" y="366.96" width="0.59" height="1.1" fill="#606060" opacity="0.42"/><rect x="1109.72" y="369.29" width="1.77" height="1.1" fill="#606060" opacity="0.42"/><rect x="1112.08" y="369.29" width="2.95" height="1.1" fill="#606060" opacity="0.42"/><rect x="1115.62" y="369.29" width="5.31" height="1.1" fill="#606060" opacity="0.42"/><rect x="1121.52" y="369.29" width="3.54" height="1.1" fill="#606060" opacity="0.42"/><rect x="1125.65" y="369.29" width="2.36" height="1.1" fill="#606060" opacity="0.42"/><rect x="1128.60" y="369.29" width="3.54" height="1.1" fill="#606060" opacity="0.42"/><rect x="1109.72" y="371.62" width="2.36" height="1.1" fill="#606060" opacity="0.42"/><rect x="1112.67" y="371.62" width="3.54" height="1.1" fill="#606060" opacity="0.42"/><rect x="1116.80" y="371.62" width="5.31" height="1.1" fill="#606060" opacity="0.42"/><rect x="1122.70" y="371.62" width="2.95" height="1.1" fill="#606060" opacity="0.42"/><rect x="1107.36" y="378.61" width="4.72" height="1.1" fill="#606060" opacity="0.42"/><rect x="1112.67" y="378.61" width="1.77" height="1.1" fill="#606060" opacity="0.42"/><rect x="1115.03" y="378.61" width="5.31" height="1.1" fill="#606060" opacity="0.42"/><rect x="1120.93" y="378.61" width="1.77" height="1.1" fill="#606060" opacity="0.42"/><rect x="1123.29" y="378.61" width="2.36" height="1.1" fill="#606060" opacity="0.42"/><rect x="1126.24" y="378.61" width="1.77" height="1.1" fill="#606060" opacity="0.42"/><rect x="1128.60" y="378.61" width="2.95" height="1.1" fill="#606060" opacity="0.42"/><rect x="1109.72" y="380.94" width="2.95" height="1.1" fill="#606060" opacity="0.42"/><rect x="1113.26" y="380.94" width="5.31" height="1.1" fill="#606060" opacity="0.42"/><rect x="1119.16" y="380.94" width="5.31" height="1.1" fill="#606060" opacity="0.42"/><rect x="1120.34" y="380.94" width="5.90" height="1.1" fill="#3a90e0" opacity="0.8"/><rect x="1107.36" y="383.27" width="4.72" height="1.1" fill="#606060" opacity="0.42"/><rect x="1112.67" y="383.27" width="1.18" height="1.1" fill="#606060" opacity="0.42"/><rect x="1114.44" y="383.27" width="3.54" height="1.1" fill="#606060" opacity="0.42"/><rect x="1118.57" y="383.27" width="0.59" height="1.1" fill="#606060" opacity="0.42"/><rect x="1105.00" y="385.60" width="2.36" height="1.1" fill="#606060" opacity="0.42"/><rect x="1107.95" y="385.60" width="2.95" height="1.1" fill="#606060" opacity="0.42"/><rect x="1111.49" y="385.60" width="1.18" height="1.1" fill="#606060" opacity="0.42"/><rect x="1113.26" y="385.60" width="3.54" height="1.1" fill="#606060" opacity="0.42"/><rect x="1107.36" y="387.93" width="5.31" height="1.1" fill="#606060" opacity="0.42"/><rect x="1113.26" y="387.93" width="1.77" height="1.1" fill="#606060" opacity="0.42"/><rect x="1107.36" y="390.26" width="4.72" height="1.1" fill="#606060" opacity="0.42"/><rect x="1112.67" y="390.26" width="1.18" height="1.1" fill="#606060" opacity="0.42"/><rect x="1114.44" y="390.26" width="4.72" height="1.1" fill="#606060" opacity="0.42"/><rect x="1119.75" y="390.26" width="4.72" height="1.1" fill="#606060" opacity="0.42"/><rect x="1125.06" y="390.26" width="2.36" height="1.1" fill="#606060" opacity="0.42"/><rect x="1128.01" y="390.26" width="2.95" height="1.1" fill="#606060" opacity="0.42"/><rect x="1131.55" y="390.26" width="2.95" height="1.1" fill="#606060" opacity="0.42"/><rect x="1135.09" y="390.26" width="2.95" height="1.1" fill="#606060" opacity="0.42"/><rect x="1107.36" y="392.59" width="4.13" height="1.1" fill="#606060" opacity="0.42"/><rect x="1112.08" y="392.59" width="2.36" height="1.1" fill="#606060" opacity="0.42"/><rect x="1115.03" y="392.59" width="4.13" height="1.1" fill="#606060" opacity="0.42"/><rect x="1119.75" y="392.59" width="0.59" height="1.1" fill="#606060" opacity="0.42"/><rect x="1107.36" y="394.92" width="0.59" height="1.1" fill="#555" opacity="0.7"/><rect x="1107.36" y="397.25" width="1.77" height="1.1" fill="#606060" opacity="0.42"/><rect x="1109.72" y="397.25" width="2.36" height="1.1" fill="#606060" opacity="0.42"/><rect x="1112.67" y="397.25" width="2.95" height="1.1" fill="#606060" opacity="0.42"/><rect x="1116.21" y="397.25" width="2.36" height="1.1" fill="#606060" opacity="0.42"/><rect x="1119.16" y="397.25" width="1.77" height="1.1" fill="#606060" opacity="0.42"/><rect x="1121.52" y="397.25" width="3.54" height="1.1" fill="#606060" opacity="0.42"/><rect x="1125.65" y="397.25" width="4.72" height="1.1" fill="#606060" opacity="0.42"/><rect x="1130.96" y="397.25" width="1.77" height="1.1" fill="#606060" opacity="0.42"/><rect x="1133.32" y="397.25" width="4.72" height="1.1" fill="#606060" opacity="0.42"/><rect x="1138.63" y="397.25" width="4.72" height="1.1" fill="#606060" opacity="0.42"/><rect x="1143.94" y="397.25" width="1.18" height="1.1" fill="#606060" opacity="0.42"/><rect x="1105.00" y="399.58" width="2.95" height="1.1" fill="#606060" opacity="0.42"/><rect x="1108.54" y="399.58" width="4.13" height="1.1" fill="#606060" opacity="0.42"/><rect x="1105.00" y="401.91" width="4.13" height="1.1" fill="#606060" opacity="0.42"/><rect x="1109.72" y="401.91" width="2.95" height="1.1" fill="#606060" opacity="0.42"/><rect x="1113.26" y="401.91" width="1.77" height="1.1" fill="#606060" opacity="0.42"/><rect x="1115.62" y="401.91" width="5.31" height="1.1" fill="#606060" opacity="0.42"/><rect x="1121.52" y="401.91" width="1.77" height="1.1" fill="#606060" opacity="0.42"/><rect x="1123.88" y="401.91" width="1.18" height="1.1" fill="#606060" opacity="0.42"/><rect x="1125.65" y="401.91" width="1.18" height="1.1" fill="#606060" opacity="0.42"/><rect x="1127.42" y="401.91" width="5.31" height="1.1" fill="#606060" opacity="0.42"/><rect x="1133.32" y="401.91" width="2.36" height="1.1" fill="#606060" opacity="0.42"/><rect x="1105.00" y="406.57" width="0.59" height="1.1" fill="#555" opacity="0.7"/><rect x="1105.00" y="408.90" width="0.59" height="1.1" fill="#555" opacity="0.7"/><rect x="1105.00" y="411.23" width="1.18" height="1.1" fill="#606060" opacity="0.42"/><rect x="1106.77" y="411.23" width="2.36" height="1.1" fill="#606060" opacity="0.42"/><rect x="1109.72" y="411.23" width="5.31" height="1.1" fill="#606060" opacity="0.42"/><rect x="1115.62" y="411.23" width="1.77" height="1.1" fill="#606060" opacity="0.42"/><rect x="1117.98" y="411.23" width="1.77" height="1.1" fill="#606060" opacity="0.42"/><rect x="1120.34" y="411.23" width="4.13" height="1.1" fill="#606060" opacity="0.42"/><rect x="1125.06" y="411.23" width="4.72" height="1.1" fill="#606060" opacity="0.42"/><rect x="1130.37" y="411.23" width="1.18" height="1.1" fill="#606060" opacity="0.42"/><rect x="1105.00" y="413.56" width="4.13" height="1.1" fill="#606060" opacity="0.42"/><rect x="1109.72" y="413.56" width="1.18" height="1.1" fill="#606060" opacity="0.42"/><rect x="1111.49" y="413.56" width="1.18" height="1.1" fill="#606060" opacity="0.42"/><rect x="1113.26" y="413.56" width="2.95" height="1.1" fill="#606060" opacity="0.42"/><rect x="1116.80" y="413.56" width="2.36" height="1.1" fill="#606060" opacity="0.42"/><rect x="1119.75" y="413.56" width="4.72" height="1.1" fill="#606060" opacity="0.42"/><rect x="1125.06" y="413.56" width="5.31" height="1.1" fill="#606060" opacity="0.42"/><rect x="1130.96" y="413.56" width="1.18" height="1.1" fill="#606060" opacity="0.42"/><rect x="1105.00" y="415.89" width="2.36" height="1.1" fill="#606060" opacity="0.42"/><rect x="1107.95" y="415.89" width="1.77" height="1.1" fill="#606060" opacity="0.42"/><rect x="1110.31" y="415.89" width="1.18" height="1.1" fill="#606060" opacity="0.42"/><rect x="1112.08" y="415.89" width="4.13" height="1.1" fill="#606060" opacity="0.42"/><rect x="1116.80" y="415.89" width="1.77" height="1.1" fill="#606060" opacity="0.42"/><rect x="1119.16" y="415.89" width="4.72" height="1.1" fill="#606060" opacity="0.42"/><rect x="1124.47" y="415.89" width="2.95" height="1.1" fill="#606060" opacity="0.42"/><rect x="1128.01" y="415.89" width="4.13" height="1.1" fill="#606060" opacity="0.42"/><rect x="1105.00" y="418.22" width="2.36" height="1.1" fill="#606060" opacity="0.42"/><rect x="1107.95" y="418.22" width="4.72" height="1.1" fill="#606060" opacity="0.42"/><rect x="1113.26" y="418.22" width="2.36" height="1.1" fill="#606060" opacity="0.42"/><rect x="1116.21" y="418.22" width="4.13" height="1.1" fill="#606060" opacity="0.42"/><rect x="1120.93" y="418.22" width="4.13" height="1.1" fill="#606060" opacity="0.42"/><rect x="1125.65" y="418.22" width="4.72" height="1.1" fill="#606060" opacity="0.42"/><rect x="1130.96" y="418.22" width="2.36" height="1.1" fill="#606060" opacity="0.42"/><rect x="1133.91" y="418.22" width="3.54" height="1.1" fill="#606060" opacity="0.42"/><rect x="1105.00" y="420.55" width="0.59" height="1.1" fill="#555" opacity="0.7"/><rect x="1105.00" y="422.88" width="1.77" height="1.1" fill="#606060" opacity="0.42"/><rect x="1107.36" y="422.88" width="1.18" height="1.1" fill="#606060" opacity="0.42"/><rect x="1109.13" y="422.88" width="4.13" height="1.1" fill="#606060" opacity="0.42"/><rect x="1113.85" y="422.88" width="1.18" height="1.1" fill="#606060" opacity="0.42"/><rect x="1115.62" y="422.88" width="2.95" height="1.1" fill="#606060" opacity="0.42"/><rect x="1119.16" y="422.88" width="3.54" height="1.1" fill="#606060" opacity="0.42"/><rect x="1123.29" y="422.88" width="3.54" height="1.1" fill="#606060" opacity="0.42"/><rect x="1105.00" y="425.21" width="1.77" height="1.1" fill="#606060" opacity="0.42"/><rect x="1107.36" y="425.21" width="4.72" height="1.1" fill="#606060" opacity="0.42"/><rect x="1112.67" y="425.21" width="5.31" height="1.1" fill="#606060" opacity="0.42"/><rect x="1118.57" y="425.21" width="2.95" height="1.1" fill="#606060" opacity="0.42"/><rect x="1122.11" y="425.21" width="1.77" height="1.1" fill="#606060" opacity="0.42"/><rect x="1124.47" y="425.21" width="4.72" height="1.1" fill="#606060" opacity="0.42"/><rect x="1105.00" y="429.87" width="5.31" height="1.1" fill="#606060" opacity="0.42"/><rect x="1110.90" y="429.87" width="4.72" height="1.1" fill="#606060" opacity="0.42"/><rect x="1116.21" y="429.87" width="1.18" height="1.1" fill="#606060" opacity="0.42"/><rect x="1117.98" y="429.87" width="1.18" height="1.1" fill="#606060" opacity="0.42"/><rect x="1105.00" y="434.53" width="4.13" height="1.1" fill="#606060" opacity="0.42"/><rect x="1109.72" y="434.53" width="4.72" height="1.1" fill="#606060" opacity="0.42"/><rect x="1115.03" y="434.53" width="1.77" height="1.1" fill="#606060" opacity="0.42"/><rect x="1117.39" y="434.53" width="5.31" height="1.1" fill="#606060" opacity="0.42"/><rect x="1123.29" y="434.53" width="1.77" height="1.1" fill="#606060" opacity="0.42"/><rect x="1125.65" y="434.53" width="1.18" height="1.1" fill="#606060" opacity="0.42"/><rect x="1127.42" y="434.53" width="4.72" height="1.1" fill="#606060" opacity="0.42"/><rect x="1132.73" y="434.53" width="2.36" height="1.1" fill="#606060" opacity="0.42"/><rect x="1135.68" y="434.53" width="4.72" height="1.1" fill="#606060" opacity="0.42"/><rect x="1140.99" y="434.53" width="2.36" height="1.1" fill="#606060" opacity="0.42"/><rect x="1105.00" y="436.86" width="5.31" height="1.1" fill="#606060" opacity="0.42"/><rect x="1110.90" y="436.86" width="4.72" height="1.1" fill="#606060" opacity="0.42"/><rect x="1116.21" y="436.86" width="3.54" height="1.1" fill="#606060" opacity="0.42"/><rect x="1120.34" y="436.86" width="4.72" height="1.1" fill="#606060" opacity="0.42"/><rect x="1105.00" y="439.19" width="3.54" height="1.1" fill="#606060" opacity="0.42"/><rect x="1109.13" y="439.19" width="3.54" height="1.1" fill="#606060" opacity="0.42"/><rect x="1113.26" y="439.19" width="3.54" height="1.1" fill="#606060" opacity="0.42"/><rect x="1117.39" y="439.19" width="1.18" height="1.1" fill="#606060" opacity="0.42"/><rect x="1119.16" y="439.19" width="1.18" height="1.1" fill="#606060" opacity="0.42"/><rect x="1120.93" y="439.19" width="2.95" height="1.1" fill="#606060" opacity="0.42"/><rect x="1124.47" y="439.19" width="1.18" height="1.1" fill="#606060" opacity="0.42"/><rect x="1126.24" y="439.19" width="1.18" height="1.1" fill="#606060" opacity="0.42"/><rect x="1105.00" y="441.52" width="4.13" height="1.1" fill="#606060" opacity="0.42"/><rect x="1109.72" y="441.52" width="4.72" height="1.1" fill="#606060" opacity="0.42"/><rect x="1115.03" y="441.52" width="1.18" height="1.1" fill="#606060" opacity="0.42"/><rect x="1116.80" y="441.52" width="4.13" height="1.1" fill="#606060" opacity="0.42"/><rect x="1121.52" y="441.52" width="1.77" height="1.1" fill="#606060" opacity="0.42"/><rect x="1123.88" y="441.52" width="2.95" height="1.1" fill="#606060" opacity="0.42"/><rect x="1127.42" y="441.52" width="4.72" height="1.1" fill="#606060" opacity="0.42"/><rect x="1132.73" y="441.52" width="5.31" height="1.1" fill="#606060" opacity="0.42"/><rect x="1138.63" y="441.52" width="3.54" height="1.1" fill="#606060" opacity="0.42"/><rect x="1142.76" y="441.52" width="0.59" height="1.1" fill="#606060" opacity="0.42"/><rect x="1109.72" y="441.52" width="5.90" height="1.1" fill="#3a90e0" opacity="0.8"/><rect x="1105.00" y="446.18" width="1.77" height="1.1" fill="#606060" opacity="0.42"/><rect x="1107.36" y="446.18" width="1.18" height="1.1" fill="#606060" opacity="0.42"/><rect x="1109.13" y="446.18" width="4.72" height="1.1" fill="#606060" opacity="0.42"/><rect x="1114.44" y="446.18" width="5.31" height="1.1" fill="#606060" opacity="0.42"/><rect x="1120.34" y="446.18" width="1.77" height="1.1" fill="#606060" opacity="0.42"/><rect x="1122.70" y="446.18" width="2.95" height="1.1" fill="#606060" opacity="0.42"/><rect x="1126.24" y="446.18" width="1.18" height="1.1" fill="#606060" opacity="0.42"/><rect x="1128.01" y="446.18" width="4.13" height="1.1" fill="#606060" opacity="0.42"/><rect x="1107.36" y="450.84" width="3.54" height="1.1" fill="#606060" opacity="0.42"/><rect x="1111.49" y="450.84" width="4.72" height="1.1" fill="#606060" opacity="0.42"/><rect x="1116.80" y="450.84" width="4.13" height="1.1" fill="#606060" opacity="0.42"/><rect x="1121.52" y="450.84" width="2.36" height="1.1" fill="#606060" opacity="0.42"/><rect x="1124.47" y="450.84" width="3.54" height="1.1" fill="#606060" opacity="0.42"/><rect x="1128.60" y="450.84" width="0.59" height="1.1" fill="#606060" opacity="0.42"/><rect x="1107.36" y="455.50" width="3.54" height="1.1" fill="#606060" opacity="0.42"/><rect x="1111.49" y="455.50" width="2.95" height="1.1" fill="#606060" opacity="0.42"/><rect x="1115.03" y="455.50" width="3.54" height="1.1" fill="#606060" opacity="0.42"/><rect x="1119.16" y="455.50" width="2.95" height="1.1" fill="#606060" opacity="0.42"/><rect x="1107.36" y="457.83" width="1.18" height="1.1" fill="#606060" opacity="0.42"/><rect x="1109.13" y="457.83" width="1.18" height="1.1" fill="#606060" opacity="0.42"/><rect x="1110.90" y="457.83" width="1.18" height="1.1" fill="#606060" opacity="0.42"/><rect x="1112.67" y="457.83" width="3.54" height="1.1" fill="#606060" opacity="0.42"/><rect x="1116.80" y="457.83" width="3.54" height="1.1" fill="#606060" opacity="0.42"/><rect x="1120.93" y="457.83" width="4.72" height="1.1" fill="#606060" opacity="0.42"/><rect x="1126.24" y="457.83" width="1.18" height="1.1" fill="#606060" opacity="0.42"/><rect x="1128.01" y="457.83" width="1.18" height="1.1" fill="#606060" opacity="0.42"/><rect x="1129.78" y="457.83" width="1.77" height="1.1" fill="#606060" opacity="0.42"/><rect x="1132.14" y="457.83" width="2.95" height="1.1" fill="#606060" opacity="0.42"/><rect x="1135.68" y="457.83" width="3.54" height="1.1" fill="#606060" opacity="0.42"/><rect x="1139.81" y="457.83" width="1.77" height="1.1" fill="#606060" opacity="0.42"/><rect x="1142.17" y="457.83" width="1.77" height="1.1" fill="#606060" opacity="0.42"/><rect x="1144.53" y="457.83" width="0.59" height="1.1" fill="#606060" opacity="0.42"/><rect x="1107.36" y="460.16" width="5.31" height="1.1" fill="#606060" opacity="0.42"/><rect x="1113.26" y="460.16" width="4.13" height="1.1" fill="#606060" opacity="0.42"/><rect x="1117.98" y="460.16" width="2.95" height="1.1" fill="#606060" opacity="0.42"/><rect x="1121.52" y="460.16" width="4.13" height="1.1" fill="#606060" opacity="0.42"/><rect x="1126.24" y="460.16" width="3.54" height="1.1" fill="#606060" opacity="0.42"/><rect x="1105.00" y="464.82" width="2.95" height="1.1" fill="#606060" opacity="0.42"/><rect x="1108.54" y="464.82" width="5.31" height="1.1" fill="#606060" opacity="0.42"/><rect x="1114.44" y="464.82" width="4.72" height="1.1" fill="#606060" opacity="0.42"/><rect x="1119.75" y="464.82" width="3.54" height="1.1" fill="#606060" opacity="0.42"/><rect x="1123.88" y="464.82" width="2.36" height="1.1" fill="#606060" opacity="0.42"/><rect x="1105.00" y="467.15" width="2.36" height="1.1" fill="#606060" opacity="0.42"/><rect x="1107.95" y="467.15" width="4.72" height="1.1" fill="#606060" opacity="0.42"/><rect x="1113.26" y="467.15" width="4.13" height="1.1" fill="#606060" opacity="0.42"/><rect x="1117.98" y="467.15" width="1.77" height="1.1" fill="#606060" opacity="0.42"/><rect x="1105.00" y="469.48" width="5.31" height="1.1" fill="#606060" opacity="0.42"/><rect x="1110.90" y="469.48" width="5.31" height="1.1" fill="#606060" opacity="0.42"/><rect x="1116.80" y="469.48" width="3.54" height="1.1" fill="#606060" opacity="0.42"/><rect x="1120.93" y="469.48" width="1.18" height="1.1" fill="#606060" opacity="0.42"/><rect x="1122.70" y="469.48" width="1.77" height="1.1" fill="#606060" opacity="0.42"/><rect x="1125.06" y="469.48" width="0.59" height="1.1" fill="#606060" opacity="0.42"/><rect x="1105.00" y="471.81" width="3.54" height="1.1" fill="#606060" opacity="0.42"/><rect x="1109.13" y="471.81" width="5.31" height="1.1" fill="#606060" opacity="0.42"/><rect x="1115.03" y="471.81" width="4.13" height="1.1" fill="#606060" opacity="0.42"/><rect x="1119.75" y="471.81" width="3.54" height="1.1" fill="#606060" opacity="0.42"/><rect x="1123.88" y="471.81" width="2.36" height="1.1" fill="#606060" opacity="0.42"/><rect x="1126.83" y="471.81" width="2.95" height="1.1" fill="#606060" opacity="0.42"/><rect x="1130.37" y="471.81" width="4.13" height="1.1" fill="#606060" opacity="0.42"/><rect x="1135.09" y="471.81" width="0.59" height="1.1" fill="#606060" opacity="0.42"/><rect x="1105.00" y="476.47" width="3.54" height="1.1" fill="#606060" opacity="0.42"/><rect x="1109.13" y="476.47" width="5.31" height="1.1" fill="#606060" opacity="0.42"/><rect x="1115.03" y="476.47" width="4.13" height="1.1" fill="#606060" opacity="0.42"/><rect x="1119.75" y="476.47" width="2.95" height="1.1" fill="#606060" opacity="0.42"/><rect x="1123.29" y="476.47" width="2.95" height="1.1" fill="#606060" opacity="0.42"/><rect x="1105.00" y="478.80" width="4.13" height="1.1" fill="#606060" opacity="0.42"/><rect x="1109.72" y="478.80" width="2.95" height="1.1" fill="#606060" opacity="0.42"/><rect x="1115.03" y="478.80" width="4.72" height="1.1" fill="#3a90e0" opacity="0.8"/><rect x="1105.00" y="481.13" width="4.72" height="1.1" fill="#606060" opacity="0.42"/><rect x="1110.31" y="481.13" width="2.36" height="1.1" fill="#606060" opacity="0.42"/><rect x="1113.26" y="481.13" width="2.36" height="1.1" fill="#606060" opacity="0.42"/><rect x="1116.21" y="481.13" width="2.36" height="1.1" fill="#606060" opacity="0.42"/><rect x="1119.16" y="481.13" width="1.77" height="1.1" fill="#606060" opacity="0.42"/><rect x="1121.52" y="481.13" width="5.31" height="1.1" fill="#606060" opacity="0.42"/><rect x="1127.42" y="481.13" width="3.54" height="1.1" fill="#606060" opacity="0.42"/><rect x="1131.55" y="481.13" width="1.18" height="1.1" fill="#606060" opacity="0.42"/><rect x="1133.32" y="481.13" width="2.95" height="1.1" fill="#606060" opacity="0.42"/><rect x="1136.86" y="481.13" width="1.18" height="1.1" fill="#606060" opacity="0.42"/><rect x="1138.63" y="481.13" width="1.18" height="1.1" fill="#606060" opacity="0.42"/><rect x="1107.36" y="483.46" width="3.54" height="1.1" fill="#606060" opacity="0.42"/><rect x="1111.49" y="483.46" width="1.77" height="1.1" fill="#606060" opacity="0.42"/><rect x="1113.85" y="483.46" width="0.59" height="1.1" fill="#606060" opacity="0.42"/><rect x="1112.08" y="483.46" width="3.54" height="1.1" fill="#e03030" opacity="0.8"/><rect x="1105.00" y="488.12" width="4.72" height="1.1" fill="#606060" opacity="0.42"/><rect x="1110.31" y="488.12" width="2.95" height="1.1" fill="#606060" opacity="0.42"/><rect x="1113.85" y="488.12" width="2.95" height="1.1" fill="#606060" opacity="0.42"/><rect x="1117.39" y="488.12" width="5.31" height="1.1" fill="#606060" opacity="0.42"/><rect x="1123.29" y="488.12" width="4.13" height="1.1" fill="#606060" opacity="0.42"/><rect x="1128.01" y="488.12" width="5.31" height="1.1" fill="#606060" opacity="0.42"/><rect x="1133.91" y="488.12" width="3.54" height="1.1" fill="#606060" opacity="0.42"/><rect x="1105.00" y="490.45" width="2.36" height="1.1" fill="#606060" opacity="0.42"/><rect x="1107.95" y="490.45" width="5.31" height="1.1" fill="#606060" opacity="0.42"/><rect x="1113.85" y="490.45" width="5.31" height="1.1" fill="#606060" opacity="0.42"/><rect x="1119.75" y="490.45" width="1.77" height="1.1" fill="#606060" opacity="0.42"/><rect x="1122.11" y="490.45" width="1.18" height="1.1" fill="#606060" opacity="0.42"/><rect x="1123.88" y="490.45" width="4.72" height="1.1" fill="#606060" opacity="0.42"/><rect x="1129.19" y="490.45" width="4.13" height="1.1" fill="#606060" opacity="0.42"/><rect x="1133.91" y="490.45" width="1.18" height="1.1" fill="#606060" opacity="0.42"/><rect x="1107.36" y="492.78" width="1.18" height="1.1" fill="#606060" opacity="0.42"/><rect x="1109.13" y="492.78" width="4.13" height="1.1" fill="#606060" opacity="0.42"/><rect x="1113.85" y="492.78" width="1.18" height="1.1" fill="#606060" opacity="0.42"/><rect x="1115.62" y="492.78" width="1.77" height="1.1" fill="#606060" opacity="0.42"/><rect x="1117.98" y="492.78" width="4.72" height="1.1" fill="#606060" opacity="0.42"/><rect x="1123.29" y="492.78" width="4.72" height="1.1" fill="#606060" opacity="0.42"/><rect x="1128.60" y="492.78" width="2.36" height="1.1" fill="#606060" opacity="0.42"/><rect x="1131.55" y="492.78" width="0.59" height="1.1" fill="#606060" opacity="0.42"/><rect x="1109.72" y="495.11" width="2.36" height="1.1" fill="#606060" opacity="0.42"/><rect x="1112.67" y="495.11" width="4.13" height="1.1" fill="#606060" opacity="0.42"/><rect x="1117.39" y="495.11" width="2.95" height="1.1" fill="#606060" opacity="0.42"/><rect x="1120.93" y="495.11" width="4.72" height="1.1" fill="#606060" opacity="0.42"/><rect x="1126.24" y="495.11" width="4.72" height="1.1" fill="#606060" opacity="0.42"/><rect x="1131.55" y="495.11" width="3.54" height="1.1" fill="#606060" opacity="0.42"/><rect x="1135.68" y="495.11" width="3.54" height="1.1" fill="#606060" opacity="0.42"/><rect x="1107.36" y="499.77" width="2.36" height="1.1" fill="#606060" opacity="0.42"/><rect x="1110.31" y="499.77" width="2.36" height="1.1" fill="#606060" opacity="0.42"/><rect x="1113.26" y="499.77" width="1.18" height="1.1" fill="#606060" opacity="0.42"/><rect x="1115.03" y="499.77" width="5.31" height="1.1" fill="#606060" opacity="0.42"/><rect x="1120.93" y="499.77" width="1.18" height="1.1" fill="#606060" opacity="0.42"/><rect x="1122.70" y="499.77" width="0.59" height="1.1" fill="#606060" opacity="0.42"/><rect x="1107.36" y="506.76" width="0.59" height="1.1" fill="#555" opacity="0.7"/><rect x="1107.36" y="509.09" width="0.59" height="1.1" fill="#555" opacity="0.7"/><rect x="1109.72" y="511.42" width="2.95" height="1.1" fill="#606060" opacity="0.42"/><rect x="1113.26" y="511.42" width="5.31" height="1.1" fill="#606060" opacity="0.42"/><rect x="1119.16" y="511.42" width="2.36" height="1.1" fill="#606060" opacity="0.42"/><rect x="1122.11" y="511.42" width="3.54" height="1.1" fill="#606060" opacity="0.42"/><rect x="1126.24" y="511.42" width="4.72" height="1.1" fill="#606060" opacity="0.42"/><rect x="1131.55" y="511.42" width="2.36" height="1.1" fill="#606060" opacity="0.42"/><rect x="1134.50" y="511.42" width="2.36" height="1.1" fill="#606060" opacity="0.42"/><rect x="1112.08" y="513.75" width="5.31" height="1.1" fill="#606060" opacity="0.42"/><rect x="1117.98" y="513.75" width="4.72" height="1.1" fill="#606060" opacity="0.42"/><rect x="1123.29" y="513.75" width="2.95" height="1.1" fill="#606060" opacity="0.42"/><rect x="1109.72" y="516.08" width="2.95" height="1.1" fill="#606060" opacity="0.42"/><rect x="1113.26" y="516.08" width="4.72" height="1.1" fill="#606060" opacity="0.42"/><rect x="1118.57" y="516.08" width="1.18" height="1.1" fill="#606060" opacity="0.42"/><rect x="1120.34" y="516.08" width="2.95" height="1.1" fill="#606060" opacity="0.42"/><rect x="1123.88" y="516.08" width="2.36" height="1.1" fill="#606060" opacity="0.42"/><rect x="1126.83" y="516.08" width="4.72" height="1.1" fill="#606060" opacity="0.42"/><rect x="1109.72" y="518.41" width="1.18" height="1.1" fill="#606060" opacity="0.42"/><rect x="1111.49" y="518.41" width="2.95" height="1.1" fill="#606060" opacity="0.42"/><rect x="1115.03" y="518.41" width="1.18" height="1.1" fill="#606060" opacity="0.42"/><rect x="1116.80" y="518.41" width="5.31" height="1.1" fill="#606060" opacity="0.42"/><rect x="1122.70" y="518.41" width="4.13" height="1.1" fill="#606060" opacity="0.42"/><rect x="1127.42" y="518.41" width="5.31" height="1.1" fill="#606060" opacity="0.42"/><rect x="1133.32" y="518.41" width="2.95" height="1.1" fill="#606060" opacity="0.42"/><rect x="1136.86" y="518.41" width="4.72" height="1.1" fill="#606060" opacity="0.42"/><rect x="1142.17" y="518.41" width="1.77" height="1.1" fill="#606060" opacity="0.42"/><rect x="1109.72" y="520.74" width="2.36" height="1.1" fill="#606060" opacity="0.42"/><rect x="1112.67" y="520.74" width="3.54" height="1.1" fill="#606060" opacity="0.42"/><rect x="1116.80" y="520.74" width="1.18" height="1.1" fill="#606060" opacity="0.42"/><rect x="1118.57" y="520.74" width="2.36" height="1.1" fill="#606060" opacity="0.42"/><rect x="1121.52" y="520.74" width="2.36" height="1.1" fill="#606060" opacity="0.42"/><rect x="1115.03" y="520.74" width="5.90" height="1.1" fill="#e03030" opacity="0.8"/><rect x="1107.36" y="525.40" width="5.31" height="1.1" fill="#606060" opacity="0.42"/><rect x="1113.26" y="525.40" width="5.31" height="1.1" fill="#606060" opacity="0.42"/><rect x="1119.16" y="525.40" width="1.77" height="1.1" fill="#606060" opacity="0.42"/><rect x="1121.52" y="525.40" width="3.54" height="1.1" fill="#606060" opacity="0.42"/><rect x="1125.65" y="525.40" width="1.18" height="1.1" fill="#606060" opacity="0.42"/><rect x="1127.42" y="525.40" width="2.95" height="1.1" fill="#606060" opacity="0.42"/><rect x="1130.96" y="525.40" width="4.72" height="1.1" fill="#606060" opacity="0.42"/><rect x="1136.27" y="525.40" width="2.95" height="1.1" fill="#606060" opacity="0.42"/><rect x="1139.81" y="525.40" width="1.77" height="1.1" fill="#606060" opacity="0.42"/><rect x="1142.17" y="525.40" width="2.95" height="1.1" fill="#606060" opacity="0.42"/><rect x="1109.72" y="527.73" width="3.54" height="1.1" fill="#606060" opacity="0.42"/><rect x="1113.85" y="527.73" width="4.13" height="1.1" fill="#606060" opacity="0.42"/><rect x="1118.57" y="527.73" width="1.77" height="1.1" fill="#606060" opacity="0.42"/><rect x="1112.08" y="530.06" width="1.77" height="1.1" fill="#606060" opacity="0.42"/><rect x="1114.44" y="530.06" width="4.13" height="1.1" fill="#606060" opacity="0.42"/><rect x="1119.16" y="530.06" width="1.77" height="1.1" fill="#606060" opacity="0.42"/><rect x="1121.52" y="530.06" width="2.36" height="1.1" fill="#606060" opacity="0.42"/><rect x="1124.47" y="530.06" width="1.77" height="1.1" fill="#606060" opacity="0.42"/><rect x="1126.83" y="530.06" width="4.72" height="1.1" fill="#606060" opacity="0.42"/><rect x="1132.14" y="530.06" width="5.31" height="1.1" fill="#606060" opacity="0.42"/><rect x="1138.04" y="530.06" width="1.77" height="1.1" fill="#606060" opacity="0.42"/><rect x="1140.40" y="530.06" width="1.18" height="1.1" fill="#606060" opacity="0.42"/><rect x="1122.11" y="530.06" width="5.31" height="1.1" fill="#3a90e0" opacity="0.8"/><rect x="1109.72" y="532.39" width="1.18" height="1.1" fill="#606060" opacity="0.42"/><rect x="1111.49" y="532.39" width="2.95" height="1.1" fill="#606060" opacity="0.42"/><rect x="1115.03" y="532.39" width="2.36" height="1.1" fill="#606060" opacity="0.42"/><rect x="1117.98" y="532.39" width="3.54" height="1.1" fill="#606060" opacity="0.42"/><rect x="1122.11" y="532.39" width="4.72" height="1.1" fill="#606060" opacity="0.42"/><rect x="1127.42" y="532.39" width="3.54" height="1.1" fill="#606060" opacity="0.42"/><rect x="1107.36" y="534.72" width="2.95" height="1.1" fill="#606060" opacity="0.42"/><rect x="1110.90" y="534.72" width="2.95" height="1.1" fill="#606060" opacity="0.42"/><rect x="1114.44" y="534.72" width="4.72" height="1.1" fill="#606060" opacity="0.42"/><rect x="1119.75" y="534.72" width="1.77" height="1.1" fill="#606060" opacity="0.42"/><rect x="1109.72" y="537.05" width="4.13" height="1.1" fill="#606060" opacity="0.42"/><rect x="1114.44" y="537.05" width="5.31" height="1.1" fill="#606060" opacity="0.42"/><rect x="1120.34" y="537.05" width="4.72" height="1.1" fill="#606060" opacity="0.42"/><rect x="1125.65" y="537.05" width="1.77" height="1.1" fill="#606060" opacity="0.42"/><rect x="1128.01" y="537.05" width="1.77" height="1.1" fill="#606060" opacity="0.42"/><rect x="1130.37" y="537.05" width="2.36" height="1.1" fill="#606060" opacity="0.42"/><rect x="1133.32" y="537.05" width="1.77" height="1.1" fill="#606060" opacity="0.42"/><rect x="1135.68" y="537.05" width="2.36" height="1.1" fill="#606060" opacity="0.42"/><rect x="1138.63" y="537.05" width="2.36" height="1.1" fill="#606060" opacity="0.42"/><rect x="1112.08" y="539.38" width="1.77" height="1.1" fill="#606060" opacity="0.42"/><rect x="1114.44" y="539.38" width="1.77" height="1.1" fill="#606060" opacity="0.42"/><rect x="1116.80" y="539.38" width="2.95" height="1.1" fill="#606060" opacity="0.42"/><rect x="1120.34" y="539.38" width="1.18" height="1.1" fill="#606060" opacity="0.42"/><rect x="1122.11" y="539.38" width="2.36" height="1.1" fill="#606060" opacity="0.42"/><rect x="1125.06" y="539.38" width="1.77" height="1.1" fill="#606060" opacity="0.42"/><rect x="1127.42" y="539.38" width="4.72" height="1.1" fill="#606060" opacity="0.42"/><rect x="1132.73" y="539.38" width="4.72" height="1.1" fill="#606060" opacity="0.42"/><rect x="1138.04" y="539.38" width="0.59" height="1.1" fill="#606060" opacity="0.42"/><rect x="1112.08" y="541.71" width="2.95" height="1.1" fill="#606060" opacity="0.42"/><rect x="1115.62" y="541.71" width="2.36" height="1.1" fill="#606060" opacity="0.42"/><rect x="1118.57" y="541.71" width="4.72" height="1.1" fill="#606060" opacity="0.42"/><rect x="1123.88" y="541.71" width="5.31" height="1.1" fill="#606060" opacity="0.42"/><rect x="1129.78" y="541.71" width="4.13" height="1.1" fill="#606060" opacity="0.42"/><rect x="1134.50" y="541.71" width="4.72" height="1.1" fill="#606060" opacity="0.42"/><rect x="1139.81" y="541.71" width="1.18" height="1.1" fill="#606060" opacity="0.42"/><rect x="1112.08" y="544.04" width="2.95" height="1.1" fill="#606060" opacity="0.42"/><rect x="1115.62" y="544.04" width="1.18" height="1.1" fill="#606060" opacity="0.42"/><rect x="1117.39" y="544.04" width="3.54" height="1.1" fill="#606060" opacity="0.42"/><rect x="1121.52" y="544.04" width="4.13" height="1.1" fill="#606060" opacity="0.42"/><rect x="1126.24" y="544.04" width="2.95" height="1.1" fill="#606060" opacity="0.42"/><rect x="1129.78" y="544.04" width="4.13" height="1.1" fill="#606060" opacity="0.42"/><rect x="1134.50" y="544.04" width="3.54" height="1.1" fill="#606060" opacity="0.42"/><rect x="1138.63" y="544.04" width="5.31" height="1.1" fill="#606060" opacity="0.42"/><rect x="1144.53" y="544.04" width="1.77" height="1.1" fill="#606060" opacity="0.42"/><rect x="1112.08" y="546.37" width="0.59" height="1.1" fill="#555" opacity="0.7"/><rect x="1112.08" y="548.70" width="2.36" height="1.1" fill="#606060" opacity="0.42"/><rect x="1115.03" y="548.70" width="3.54" height="1.1" fill="#606060" opacity="0.42"/><rect x="1119.16" y="548.70" width="1.18" height="1.1" fill="#606060" opacity="0.42"/><rect x="1112.08" y="551.03" width="2.95" height="1.1" fill="#606060" opacity="0.42"/><rect x="1115.62" y="551.03" width="2.95" height="1.1" fill="#606060" opacity="0.42"/><rect x="1119.16" y="551.03" width="1.18" height="1.1" fill="#606060" opacity="0.42"/><rect x="1120.93" y="551.03" width="2.95" height="1.1" fill="#606060" opacity="0.42"/><rect x="1124.47" y="551.03" width="1.77" height="1.1" fill="#606060" opacity="0.42"/><rect x="1126.83" y="551.03" width="2.36" height="1.1" fill="#606060" opacity="0.42"/><rect x="1129.78" y="551.03" width="2.95" height="1.1" fill="#606060" opacity="0.42"/><rect x="1133.32" y="551.03" width="4.72" height="1.1" fill="#606060" opacity="0.42"/><rect x="1112.08" y="553.36" width="4.13" height="1.1" fill="#606060" opacity="0.42"/><rect x="1116.80" y="553.36" width="2.95" height="1.1" fill="#606060" opacity="0.42"/><rect x="1112.08" y="558.02" width="1.77" height="1.1" fill="#606060" opacity="0.42"/><rect x="1114.44" y="558.02" width="3.54" height="1.1" fill="#606060" opacity="0.42"/><rect x="1118.57" y="558.02" width="2.36" height="1.1" fill="#606060" opacity="0.42"/><rect x="1121.52" y="558.02" width="4.13" height="1.1" fill="#606060" opacity="0.42"/><rect x="1112.08" y="562.68" width="4.13" height="1.1" fill="#606060" opacity="0.42"/><rect x="1116.80" y="562.68" width="2.95" height="1.1" fill="#606060" opacity="0.42"/><rect x="1120.34" y="562.68" width="4.13" height="1.1" fill="#606060" opacity="0.42"/><rect x="1125.06" y="562.68" width="2.36" height="1.1" fill="#606060" opacity="0.42"/><rect x="1128.01" y="562.68" width="2.36" height="1.1" fill="#606060" opacity="0.42"/><rect x="1130.96" y="562.68" width="1.77" height="1.1" fill="#606060" opacity="0.42"/><rect x="1133.32" y="562.68" width="5.31" height="1.1" fill="#606060" opacity="0.42"/><rect x="1139.22" y="562.68" width="1.18" height="1.1" fill="#606060" opacity="0.42"/><rect x="1140.99" y="562.68" width="1.18" height="1.1" fill="#606060" opacity="0.42"/><rect x="1112.08" y="565.01" width="4.72" height="1.1" fill="#606060" opacity="0.42"/><rect x="1117.39" y="565.01" width="1.18" height="1.1" fill="#606060" opacity="0.42"/><rect x="1119.16" y="565.01" width="2.36" height="1.1" fill="#606060" opacity="0.42"/><rect x="1122.11" y="565.01" width="2.95" height="1.1" fill="#606060" opacity="0.42"/><rect x="1125.65" y="565.01" width="2.36" height="1.1" fill="#606060" opacity="0.42"/><rect x="1114.44" y="569.67" width="4.13" height="1.1" fill="#606060" opacity="0.42"/><rect x="1119.16" y="569.67" width="2.36" height="1.1" fill="#606060" opacity="0.42"/><rect x="1122.11" y="569.67" width="3.54" height="1.1" fill="#606060" opacity="0.42"/><rect x="1112.08" y="572.00" width="1.18" height="1.1" fill="#606060" opacity="0.42"/><rect x="1113.85" y="572.00" width="2.36" height="1.1" fill="#606060" opacity="0.42"/><rect x="1116.80" y="572.00" width="4.72" height="1.1" fill="#606060" opacity="0.42"/><rect x="1122.11" y="572.00" width="5.31" height="1.1" fill="#606060" opacity="0.42"/><rect x="1128.01" y="572.00" width="1.77" height="1.1" fill="#606060" opacity="0.42"/><rect x="1130.37" y="572.00" width="5.31" height="1.1" fill="#606060" opacity="0.42"/><rect x="1136.27" y="572.00" width="4.13" height="1.1" fill="#606060" opacity="0.42"/><rect x="1114.44" y="574.33" width="5.31" height="1.1" fill="#606060" opacity="0.42"/><rect x="1120.34" y="574.33" width="5.31" height="1.1" fill="#606060" opacity="0.42"/><rect x="1126.24" y="574.33" width="3.54" height="1.1" fill="#606060" opacity="0.42"/><rect x="1106.18" y="581.32" width="25.96" height="1.1" fill="#808080" opacity="0.6"/><rect x="1097" y="581.5" width="69" height="1" fill="#e4e4e4"/></svg></div>
<div class=a style="left:1097px;top:213px;width:68.4px;height:65.3px;background:rgba(120,120,255,0.35);border:1.2px solid #5a5aff;border-radius:2px"></div>
<!-- right dock strip -->
<div class=a style="left:1168.2px;top:115.5px;width:30.6px;height:672px;background:#efefef;border-left:1px solid #d0d0d0"></div>
<!-- status bar -->
<div class=a style="left:1.1px;top:787px;width:1197.7px;height:36px;background:linear-gradient(#f8f8f8,#ececec);border-top:1px solid #dcdcdc"></div>
<div class=a style="left:1.1px;top:821.8px;width:1197.7px;height:1.2px;background:#c6c6c6"></div>
<div class=a style="left:984px;top:794.6px;width:213px;height:23.8px;background:#fff;border:1.3px solid #b4b4b4;border-radius:3px"></div>
<div class=a style="left:983.7px;top:794.3px;width:4.3px;height:24px;background:linear-gradient(90deg,#2f6e9e,#9ccaf0 45%,#3a7cb0);border-radius:2px"></div>
<svg class=a style="left:950px;top:790px" width="40" height="32"><defs><linearGradient id="og" x1="0" y1="0" x2="0" y2="1"><stop offset="0" stop-color="#f2b070"/><stop offset="1" stop-color="#ea5f24"/></linearGradient></defs><g fill="none" stroke-linecap="round" stroke-linejoin="round"><path d="M17.9 9V24.5M11.8 20.2L17.9 25.7L24 20.2" stroke="#d8622a" stroke-width="7"/><path d="M17.9 9V24.5M11.8 20.2L17.9 25.7L24 20.2" stroke="url(#og)" stroke-width="4.6"/></g></svg>

<svg width="0" height="0" style="position:absolute"><defs>
<symbol id="gear" viewBox="0 0 22 22">
 <path d="M5.6 1.2L10.2 5.9L5.6 10.6L1 5.9Z" fill="var(--gf)" stroke="var(--gs)" stroke-width="1.1"/>
 <circle cx="5.6" cy="5.9" r="1.5" fill="var(--gh)" stroke="var(--gs)" stroke-width="0.8"/>
 <path d="M13.6 6.6l1.1 1.8 2-.7.3 2.1 2.1.3-.7 2 1.8 1.1-1.8 1.1.7 2-2.1.3-.3 2.1-2-.7-1.1 1.8-1.1-1.8-2 .7-.3-2.1-2.1-.3.7-2-1.8-1.1 1.8-1.1-.7-2 2.1-.3.3-2.1 2 .7z" fill="var(--gf)" stroke="var(--gs)" stroke-width="1.1"/>
 <circle cx="13.6" cy="13.7" r="2" fill="var(--gh)" stroke="var(--gs)" stroke-width="0.8"/>
 <path d="M2.4 16.4L6.2 20.2M6.2 16.4L2.4 20.2" stroke="var(--gs)" stroke-width="2.5" stroke-linecap="round"/><path d="M2.4 16.4L6.2 20.2M6.2 16.4L2.4 20.2" stroke="var(--gf)" stroke-width="1" stroke-linecap="round"/>
</symbol>
<symbol id="gdot" viewBox="0 0 16 16">
 <circle cx="8" cy="8" r="7" fill="none" stroke="#d6d6d6" stroke-width="2" stroke-dasharray="1.5 1.3"/>
 <circle cx="8" cy="8" r="5.4" fill="url(#gg)"/>
 <ellipse cx="6.4" cy="9.6" rx="2.2" ry="2.8" transform="rotate(-35 6.4 9.6)" fill="#b8f0c8" opacity="0.8"/>
 <circle cx="5.7" cy="9.3" r="0.75" fill="#153a20"/>
</symbol>
<symbol id="docic" viewBox="0 0 18 20"><rect x="1.3" y="1.3" width="14.6" height="16.4" rx="2.6" fill="#fafafa" stroke="#bcbcbc" stroke-width="1.5"/><path d="M4.3 10.2L6.9 3.6H7.9L10.5 10.2M5.3 7.9H9.5" fill="none" stroke="#4a86c0" stroke-width="1.5"/><path d="M10.5 4.4h3.5M10.5 6.5h3.5M11 8.6h3M4.3 11.8h9.7M4.3 13.8h7" stroke="#8cc0ea" stroke-width="0.9"/></symbol>
<radialGradient id="gg" cx="0.45" cy="0.3" r="0.8"><stop offset="0" stop-color="#6fd890"/><stop offset="0.6" stop-color="#34ad66"/><stop offset="1" stop-color="#1f7a48"/></radialGradient>
</defs></svg>
<svg class=a style="left:60px;top:183.80px;--gf:#ececec;--gs:#a8a8a8;--gh:#fff" width="22" height="22" viewBox="0 0 22 22"><use href="#gear" width="22" height="22"/></svg>
<svg class=a style="left:60px;top:206.35px;--gf:#c8dcee;--gs:#a6c4de;--gh:#3089c8" width="22" height="22" viewBox="0 0 22 22"><use href="#gear" width="22" height="22"/></svg>
<svg class=a style="left:60px;top:228.90px;--gf:#ececec;--gs:#a8a8a8;--gh:#fff" width="22" height="22" viewBox="0 0 22 22"><use href="#gear" width="22" height="22"/></svg>
<svg class=a style="left:60px;top:251.45px;--gf:#ececec;--gs:#a8a8a8;--gh:#fff" width="22" height="22" viewBox="0 0 22 22"><use href="#gear" width="22" height="22"/></svg>
<svg class=a style="left:60px;top:274.00px;--gf:#ececec;--gs:#a8a8a8;--gh:#fff" width="22" height="22" viewBox="0 0 22 22"><use href="#gear" width="22" height="22"/></svg>
<svg class=a style="left:60px;top:296.55px;--gf:#ececec;--gs:#a8a8a8;--gh:#fff" width="22" height="22" viewBox="0 0 22 22"><use href="#gear" width="22" height="22"/></svg>
<svg class=a style="left:60px;top:319.10px;--gf:#ececec;--gs:#a8a8a8;--gh:#fff" width="22" height="22" viewBox="0 0 22 22"><use href="#gear" width="22" height="22"/></svg>
<svg class=a style="left:60px;top:341.65px;--gf:#ececec;--gs:#a8a8a8;--gh:#fff" width="22" height="22" viewBox="0 0 22 22"><use href="#gear" width="22" height="22"/></svg>
<svg class=a style="left:60px;top:364.20px;--gf:#ececec;--gs:#a8a8a8;--gh:#fff" width="22" height="22" viewBox="0 0 22 22"><use href="#gear" width="22" height="22"/></svg>
<svg class=a style="left:60px;top:386.75px;--gf:#ececec;--gs:#a8a8a8;--gh:#fff" width="22" height="6.5" viewBox="0 0 22 6.5"><use href="#gear" width="22" height="22"/></svg>
<svg class=a style="left:390.6px;top:80.5px;--gf:#e6e6e6;--gs:#9c9c9c;--gh:#fafafa" width="29" height="29"><use href="#gear" width="29" height="29"/></svg>
<svg class=a style="left:8.2px;top:216.5px" width="16" height="16"><use href="#gdot"/></svg>
<svg class=a style="left:8.8px;top:488.3px" width="16" height="16"><use href="#gdot"/></svg>
<svg class=a style="left:7.0px;top:798.5px" width="16" height="16"><use href="#gdot"/></svg>
<svg class=a style="left:152.0px;top:798.5px" width="16" height="16"><use href="#gdot"/></svg>
<svg class=a style="left:1175.8px;top:121.0px" width="16" height="16"><use href="#gdot"/></svg>
<svg class=a style="left:8px;top:369.8px" width="18" height="20"><use href="#docic"/></svg>
<svg class=a style="left:7px;top:633px" width="20" height="19"><path d="M1 3Q1 1 3 1H8L10 2.8H17Q19 2.8 19 4.8V16Q19 18 17 18H3Q1 18 1 16Z" fill="url(#fg)"/><path d="M1 5.6H19V16Q19 18 17 18H3Q1 18 1 16Z" fill="#6e6e6e"/></svg>
<div class=a style="left:56.9px;top:67.2px;width:5.0px;height:1.2px;background:#1a1a1a"></div>
<div class=a style="left:103.1px;top:67.2px;width:11.4px;height:1.2px;background:#1a1a1a"></div>
<div class=a style="left:186.7px;top:67.2px;width:13.1px;height:1.2px;background:#1a1a1a"></div>
<div class=a style="left:241.25px;top:67.2px;width:14.2px;height:1.2px;background:#1a1a1a"></div>
<div class=a style="left:385px;top:67.2px;width:11.0px;height:1.2px;background:#1a1a1a"></div>
<div class=a style="left:434px;top:67.2px;width:12.0px;height:1.2px;background:#1a1a1a"></div>
<div class=a style="left:487.5px;top:67.2px;width:13.0px;height:1.2px;background:#1a1a1a"></div>
<div class=a style="left:551.3px;top:67.2px;width:13.0px;height:1.2px;background:#1a1a1a"></div>
<div class=a style="left:675px;top:67.2px;width:11.7px;height:1.2px;background:#1a1a1a"></div>
<div class=a style="left:742px;top:67.2px;width:13.3px;height:1.2px;background:#1a1a1a"></div>
<div class=a style="left:831px;top:67.2px;width:19.0px;height:1.2px;background:#1a1a1a"></div>
<div class=a style="left:923px;top:67.2px;width:12.0px;height:1.2px;background:#1a1a1a"></div>
<span class=t style='left:242.00px;top:15.20px;font-size:17px;line-height:17px;color:#f2f2f2;font-weight:700;letter-spacing:0.457px;'>default:  core - [ core:framework/source/uifactory/menubarfactory.cxx ] — KDevelop</span><span class=t style='left:13.00px;top:49.10px;font-size:19.5px;line-height:19.5px;color:#000;letter-spacing:0.667px;'>Session</span><span class=t style='left:102.00px;top:49.10px;font-size:19.5px;line-height:19.5px;color:#000;letter-spacing:1.000px;'>Project</span><span class=t style='left:185.00px;top:49.10px;font-size:19.5px;line-height:19.5px;color:#000;letter-spacing:1.500px;'>Run</span><span class=t style='left:240.00px;top:49.10px;font-size:19.5px;line-height:19.5px;color:#000;letter-spacing:1.333px;'>Navigation</span><span class=t style='left:384.00px;top:49.10px;font-size:19.5px;line-height:19.5px;color:#000;letter-spacing:0.667px;'>File</span><span class=t style='left:433.00px;top:49.10px;font-size:19.5px;line-height:19.5px;color:#000;letter-spacing:1.333px;'>Edit</span><span class=t style='left:488.00px;top:49.10px;font-size:19.5px;line-height:19.5px;color:#000;letter-spacing:1.000px;'>View</span><span class=t style='left:550.00px;top:49.10px;font-size:19.5px;line-height:19.5px;color:#000;letter-spacing:1.250px;'>Bookmarks</span><span class=t style='left:675.00px;top:49.10px;font-size:19.5px;line-height:19.5px;color:#000;letter-spacing:1.250px;'>Tools</span><span class=t style='left:742.00px;top:49.10px;font-size:19.5px;line-height:19.5px;color:#000;letter-spacing:0.667px;'>Code</span><span class=t style='left:832.00px;top:49.10px;font-size:19.5px;line-height:19.5px;color:#000;letter-spacing:1.200px;'>Window</span><span class=t style='left:923.00px;top:49.10px;font-size:19.5px;line-height:19.5px;color:#000;letter-spacing:1.286px;'>Settings</span><span class=t style='left:1129.00px;top:49.10px;font-size:19.5px;line-height:19.5px;color:#000;letter-spacing:1.000px;'>Code</span><span class=t style='left:16.50px;top:86.40px;font-size:19.5px;line-height:19.5px;color:#000;letter-spacing:1.175px;'>Build</span><span class=t style='left:109.00px;top:86.40px;font-size:19.5px;line-height:19.5px;color:#000;letter-spacing:1.333px;'>Stop</span><span class=t style='left:206.00px;top:86.40px;font-size:19.5px;line-height:19.5px;color:#000;letter-spacing:1.000px;'>Stop All</span><span class=t style='left:311.50px;top:86.40px;font-size:19.5px;line-height:19.5px;color:#000;letter-spacing:1.625px;'>Debug</span><span class=t style='left:418.00px;top:86.40px;font-size:19.5px;line-height:19.5px;color:#000;letter-spacing:1.167px;'>Execute</span><span class=t style='left:582.00px;top:86.20px;font-size:19.5px;line-height:19.5px;color:#808080;letter-spacing:0.792px;'>Quick Open...</span><span class=t style='left:894.30px;top:86.20px;font-size:19.5px;line-height:19.5px;color:#808080;letter-spacing:1.078px;'>Outline...</span><span class=t style='left:36.20px;top:121.00px;font-size:19.5px;line-height:19.5px;color:#000;letter-spacing:0.829px;'>Projects</span><span class=t style='left:47.80px;top:153.40px;font-size:19.5px;line-height:19.5px;color:#000;letter-spacing:1.036px;'>Locate Current Document</span><span class=t style='left:83.80px;top:186.20px;font-size:19.5px;line-height:19.5px;color:#000;letter-spacing:1.200px;'>id</span><span class=t style='left:83.80px;top:208.75px;font-size:19.5px;line-height:19.5px;color:#ffffff;'>install</span><span class=t style='left:83.80px;top:231.30px;font-size:19.5px;line-height:19.5px;color:#000;letter-spacing:1.037px;'>install-gdb-printers</span><span class=t style='left:83.80px;top:253.85px;font-size:19.5px;line-height:19.5px;color:#000;letter-spacing:0.925px;'>install-package-%</span><span class=t style='left:83.80px;top:276.40px;font-size:19.5px;line-height:19.5px;color:#000;letter-spacing:1.050px;'>install-strip</span><span class=t style='left:83.80px;top:298.95px;font-size:19.5px;line-height:19.5px;color:#000;letter-spacing:1.054px;'>internal.clean</span><span class=t style='left:83.80px;top:321.50px;font-size:19.5px;line-height:19.5px;color:#000;letter-spacing:1.438px;'>iwyudummy</span><span class=t style='left:83.80px;top:344.05px;font-size:19.5px;line-height:19.5px;color:#000;letter-spacing:1.435px;'>iwyudummy.generate</span><span class=t style='left:83.80px;top:366.60px;font-size:19.5px;line-height:19.5px;color:#000;letter-spacing:0.995px;'>mac-app-store-packa...</span><span class=t style='left:74.60px;top:401.50px;font-size:19.5px;line-height:19.5px;color:#000;letter-spacing:0.954px;'>Build Sequence</span><span class=t style='left:34.30px;top:436.90px;font-size:19.5px;line-height:19.5px;color:#000;letter-spacing:1.967px;'>Name</span><span class=t style='left:153.20px;top:436.90px;font-size:19.5px;line-height:19.5px;color:#000;letter-spacing:1.267px;'>Path</span><span class=t style='left:62.70px;top:463.00px;font-size:19.5px;line-height:19.5px;color:#000;letter-spacing:1.500px;'>core</span><span class=t style='left:154.80px;top:463.00px;font-size:19.5px;line-height:19.5px;color:#000;letter-spacing:1.500px;'>core</span><span class=t style='left:375.00px;top:127.50px;font-size:19.5px;line-height:19.5px;color:#1b2a43;letter-spacing:1.394px;'>menubarfactory.cxx</span><span class=t style='left:1023.50px;top:127.20px;font-size:19.5px;line-height:19.5px;color:#000;letter-spacing:0.857px;'>Line: 23 Col: 1</span><span class=t style='left:25.00px;top:796.00px;font-size:19.5px;line-height:19.5px;color:#000;letter-spacing:1.000px;'>Problems</span><span class=t style='left:170.80px;top:796.00px;font-size:19.5px;line-height:19.5px;color:#000;letter-spacing:0.864px;'>Code Browser</span><span class=t style='left:1075.00px;top:796.70px;font-size:19.5px;line-height:19.5px;color:#000;letter-spacing:2.000px;'>2%</span><span class=t style='left:7.20px;top:212.80px;font-size:19.5px;line-height:19.5px;color:#000;letter-spacing:0.743px;transform:rotate(-90deg);transform-origin:0 0;'>Projects</span><span class=t style='left:7.40px;top:367.20px;font-size:19.5px;line-height:19.5px;color:#000;letter-spacing:1.312px;transform:rotate(-90deg);transform-origin:0 0;'>Documents</span><span class=t style='left:7.40px;top:483.00px;font-size:19.5px;line-height:19.5px;color:#000;letter-spacing:0.283px;transform:rotate(-90deg);transform-origin:0 0;'>Classes</span><span class=t style='left:7.40px;top:631.80px;font-size:19.5px;line-height:19.5px;color:#000;letter-spacing:1.089px;transform:rotate(-90deg);transform-origin:0 0;'>Filesystem</span><span class=t style='left:7.40px;top:776.00px;font-size:19.5px;line-height:19.5px;color:#000;letter-spacing:1.000px;transform:rotate(-90deg);transform-origin:0 0;'>Scratchpad</span><span class=t style='left:1193.30px;top:140.80px;font-size:19.5px;line-height:19.5px;color:#000;letter-spacing:0.933px;transform:rotate(90deg);transform-origin:0 0;'>External Scripts</span>
</body></html>
